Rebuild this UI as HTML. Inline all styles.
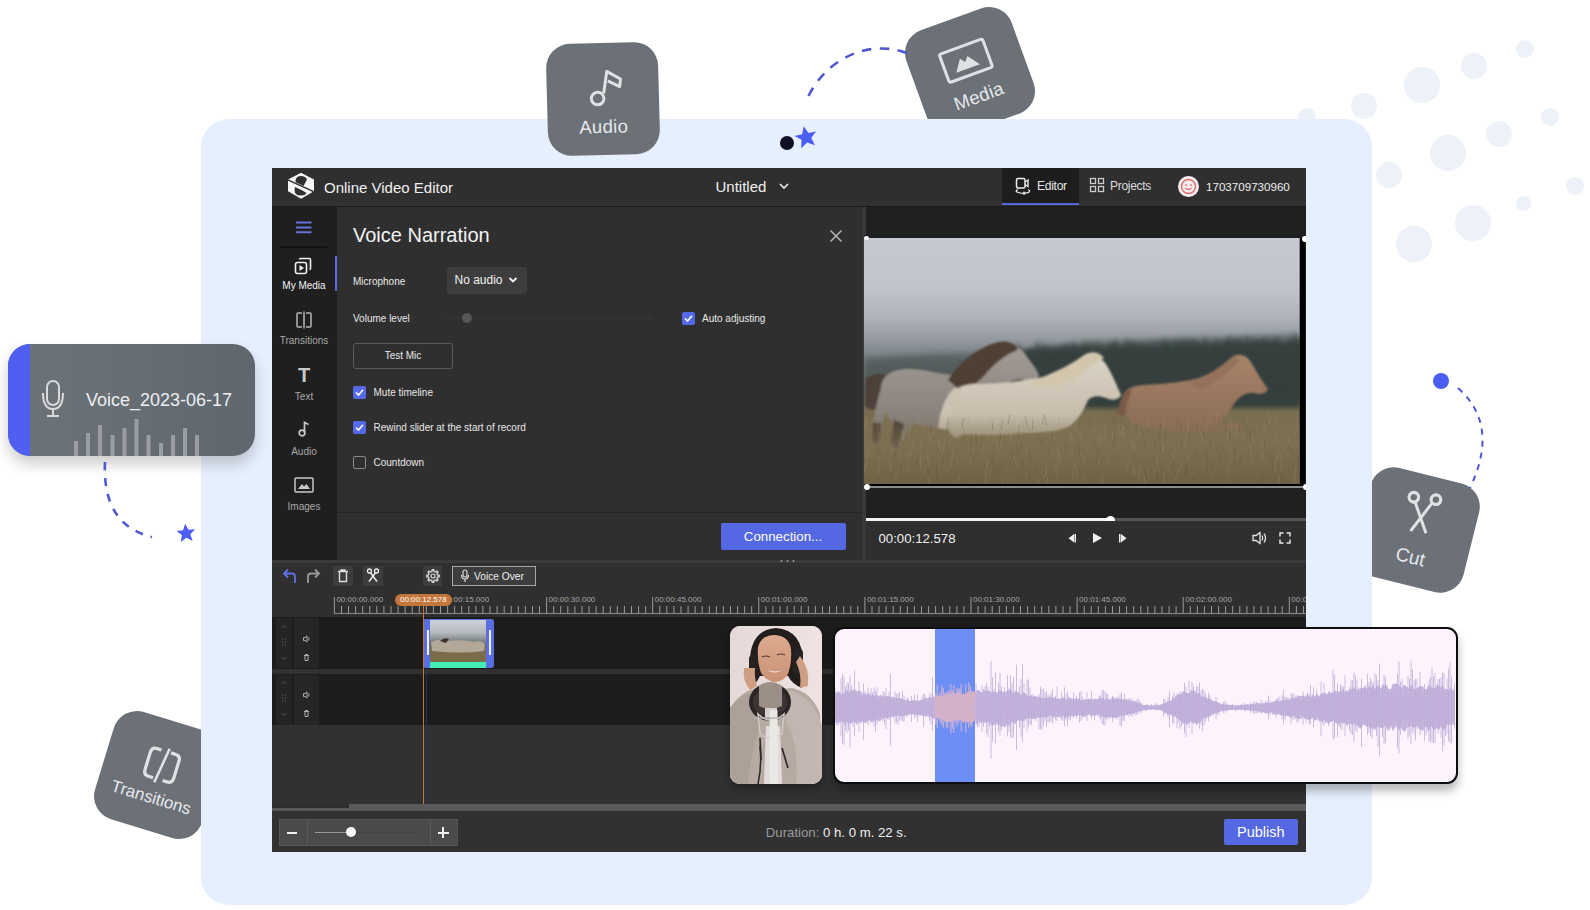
<!DOCTYPE html>
<html><head><meta charset="utf-8">
<style>
*{margin:0;padding:0;box-sizing:border-box}
html,body{width:1590px;height:910px;overflow:hidden;background:#fff;font-family:"Liberation Sans",sans-serif}
.a{position:absolute}
.dot{position:absolute;border-radius:50%;background:#edf1f8}
.card{position:absolute;background:#6b7177;border-radius:24px;color:#e3e5e9}
#panel{position:absolute;left:200.7px;top:118.7px;width:1171.7px;height:786.8px;background:#e6effd;border-radius:28px}
#app{position:absolute;left:272px;top:168px;width:1034px;height:684px;background:#2f2f2f;overflow:hidden;color:#ddd}
.t{position:absolute;white-space:nowrap;line-height:1}
.cb{position:absolute;width:13px;height:13px;border-radius:2px;background:#5568e8}
.cb svg{position:absolute;left:0;top:0}
.side .lbl{position:absolute;width:64px;left:0;text-align:center;font-size:10px;color:#a8a8a8}
</style></head><body>

<!-- decorative dots -->
<div class="dot" style="left:1516px;top:40px;width:18px;height:18px"></div>
<div class="dot" style="left:1461px;top:53px;width:26px;height:26px"></div>
<div class="dot" style="left:1404px;top:67px;width:36px;height:36px"></div>
<div class="dot" style="left:1351px;top:93px;width:26px;height:26px"></div>
<div class="dot" style="left:1298px;top:108px;width:18px;height:18px"></div>
<div class="dot" style="left:1541px;top:108px;width:18px;height:18px"></div>
<div class="dot" style="left:1486px;top:121px;width:26px;height:26px"></div>
<div class="dot" style="left:1430px;top:135px;width:36px;height:36px"></div>
<div class="dot" style="left:1376px;top:162px;width:26px;height:26px"></div>
<div class="dot" style="left:1566px;top:177px;width:18px;height:18px"></div>
<div class="dot" style="left:1516px;top:196px;width:15px;height:15px"></div>
<div class="dot" style="left:1455px;top:205px;width:36px;height:36px"></div>
<div class="dot" style="left:1396px;top:226px;width:36px;height:36px"></div>

<!-- cards behind panel -->
<div class="card" style="left:914px;top:16px;width:112px;height:112px;transform:rotate(-20deg)">
 <svg class="a" style="left:0;top:0" width="112" height="112" viewBox="0 0 112 112">
  <rect x="33" y="29" width="46" height="30" rx="2" fill="none" stroke="#dfe1e5" stroke-width="3"/>
  <path d="M43 52 L51 40 L55 45 L59 40 L68 52 Z" fill="#dfe1e5"/>
 </svg>
 <div class="t" style="left:0;width:112px;text-align:center;top:72.5px;font-size:18.5px;letter-spacing:0.2px;color:#e6e8eb">Media</div>
</div>

<div class="card" style="left:102px;top:719px;width:112px;height:112px;transform:rotate(17deg)">
 <svg class="a" style="left:0;top:0" width="112" height="112" viewBox="0 0 112 112">
  <path d="M52 31 H47.5 Q42 31 42 36.5 V54.5 Q42 60 47.5 60 H52" fill="none" stroke="#dfe1e5" stroke-width="3.2"/>
  <path d="M62 31 H66.5 Q72 31 72 36.5 V54.5 Q72 60 66.5 60 H62" fill="none" stroke="#dfe1e5" stroke-width="3.2"/>
  <path d="M59.5 27.5 L54.5 64" stroke="#dfe1e5" stroke-width="2.6"/>
 </svg>
 <div class="t" style="left:0;width:112px;text-align:center;top:71px;font-size:17px;color:#e6e8eb">Transitions</div>
</div>

<div class="card" style="left:1361px;top:474px;width:112px;height:112px;transform:rotate(14deg)">
 <svg class="a" style="left:0;top:0" width="112" height="112" viewBox="0 0 112 112">
  <circle cx="45" cy="25" r="4.8" fill="none" stroke="#dfe1e5" stroke-width="3.2"/>
  <circle cx="67" cy="22" r="4.8" fill="none" stroke="#dfe1e5" stroke-width="3.2"/>
  <path d="M47.5 29.5 L65.5 57 M64 26.5 L50 58.5" stroke="#dfe1e5" stroke-width="3"/>
 </svg>
 <div class="t" style="left:0;width:112px;text-align:center;top:74px;font-size:19px;color:#e6e8eb">Cut</div>
</div>


<div id="panel"></div>

<div id="app"><!-- header -->
<div class="a" style="left:0;top:0;width:1034px;height:34px;background:#2f2f2f"></div>
<div class="a" style="left:0;top:34px;width:1034px;height:4px;background:#313131"></div>
<div class="a" style="left:0;top:38px;width:1034px;height:1px;background:#1a1a1a"></div>
<svg class="a" style="left:14px;top:3px" width="30" height="30" viewBox="0 0 30 30">
 <path d="M15 1.7 L28 8.5 L28 20.3 L15 27.8 L2 20.3 L2 8.5 Z" fill="#f4f4f4"/>
 <path d="M9.5 9.5 Q10 5 15 5 Q19.5 5 21 8.5 L17.5 15 L9.8 11.3 Z" fill="#2f2f2f"/>
 <path d="M8.8 16 L15.5 19 L20.5 22 Q19.5 24.5 14.5 24.5 Q9 24.5 8.6 19.5 Z" fill="#2f2f2f"/>
 <path d="M1.9 8.9 L27.6 20.7" stroke="#2f2f2f" stroke-width="1.3"/>
</svg>
<div class="t" style="left:52px;top:12px;font-size:15px;color:#f0f0f0">Online Video Editor</div>
<div class="t" style="left:443.5px;top:11px;font-size:15px;color:#f0f0f0">Untitled</div>
<svg class="a" style="left:506px;top:14px" width="12" height="8" viewBox="0 0 12 8"><path d="M2 2 L6 6 L10 2" fill="none" stroke="#eee" stroke-width="1.6"/></svg>
<!-- tabs -->
<div class="a" style="left:730px;top:0;width:77px;height:37px;background:#1d1d1d"></div>
<div class="a" style="left:730px;top:34.5px;width:77px;height:2.5px;background:#5565de"></div>
<svg class="a" style="left:742px;top:9px" width="19" height="18" viewBox="0 0 19 18">
 <rect x="2.5" y="1.5" width="8.5" height="9.5" rx="1.5" fill="none" stroke="#ececec" stroke-width="1.5"/>
 <path d="M11 5 L14 3 V9.5 L11 7.5" fill="none" stroke="#ececec" stroke-width="1.4"/>
 <path d="M4 12.5 Q1 14 3 15 Q6 16.5 10.5 16.3 M14 12.5 Q17 14 14.5 15.3 Q13 15.9 11 16.2 M9.5 14.8 L11 16.2 L9.5 17.6" fill="none" stroke="#ececec" stroke-width="1.3"/>
</svg>
<div class="t" style="left:765px;top:12px;font-size:12px;letter-spacing:-0.25px;color:#e8e8e8">Editor</div>
<svg class="a" style="left:817px;top:9px" width="17" height="16" viewBox="0 0 17 16">
 <rect x="1.5" y="1.5" width="5" height="5" fill="none" stroke="#ccc" stroke-width="1.3"/>
 <rect x="9.5" y="1.5" width="5" height="5" fill="none" stroke="#ccc" stroke-width="1.3"/>
 <rect x="1.5" y="9.5" width="5" height="5" fill="none" stroke="#ccc" stroke-width="1.3"/>
 <rect x="9.5" y="9.5" width="5" height="5" fill="none" stroke="#ccc" stroke-width="1.3"/>
</svg>
<div class="t" style="left:838px;top:12px;font-size:12px;letter-spacing:-0.3px;color:#dcdcdc">Projects</div>
<svg class="a" style="left:905px;top:7px" width="23" height="23" viewBox="0 0 23 23">
 <circle cx="11.5" cy="11.5" r="10.5" fill="#f6eeee"/>
 <circle cx="11.5" cy="11.5" r="7" fill="none" stroke="#e07070" stroke-width="1.5"/>
 <circle cx="9" cy="10" r="0.9" fill="#e07070"/><circle cx="14" cy="10" r="0.9" fill="#e07070"/>
 <path d="M8.5 13 Q11.5 16 14.5 13" fill="none" stroke="#e07070" stroke-width="1.2"/>
</svg>
<div class="t" style="left:934px;top:13px;font-size:11.6px;color:#eeeeee">1703709730960</div>

<!-- sidebar -->
<div class="a side" style="left:0;top:39px;width:64.5px;height:353px;background:#1f1f1f">
 <svg class="a" style="left:24px;top:14px" width="16" height="13" viewBox="0 0 16 13"><path d="M0 1.5H15.5M0 6.4H15.5M0 11.3H15.5" stroke="#6670dc" stroke-width="2"/></svg>
 <div class="a" style="left:8px;top:39px;width:47px;height:2px;background:#121212"></div>
 <div class="a" style="left:62.5px;top:49px;width:2.5px;height:35px;background:#5a6be0"></div>
 <svg class="a" style="left:22px;top:50px" width="19" height="19" viewBox="0 0 19 19">
  <rect x="1.5" y="5.5" width="11" height="11" rx="2" fill="none" stroke="#f0f0f0" stroke-width="1.6"/>
  <path d="M5.5 2.5 Q5.5 1.5 6.5 1.5 H15.5 Q16.5 1.5 16.5 2.5 V11.5 Q16.5 12.5 15.5 12.5" fill="none" stroke="#f0f0f0" stroke-width="1.6"/>
  <path d="M5.5 8 L10 11 L5.5 14 Z" fill="#f0f0f0"/>
 </svg>
 <div class="lbl" style="top:73px;color:#f4f4f4">My Media</div>
 <svg class="a" style="left:23px;top:104px" width="18" height="18" viewBox="0 0 18 18">
  <path d="M7 2 H3 Q2 2 2 3 V15 Q2 16 3 16 H7 M11 2 H15 Q16 2 16 3 V15 Q16 16 15 16 H11 M9 0.5 V17.5" fill="none" stroke="#b8b8b8" stroke-width="1.5"/>
 </svg>
 <div class="lbl" style="top:128px">Transitions</div>
 <div class="t" style="left:0;width:64px;text-align:center;top:196px;font-size:20px;font-weight:bold;color:#c8c8c8;top:158px">T</div>
 <div class="lbl" style="top:184px">Text</div>
 <svg class="a" style="left:25px;top:214px" width="14" height="16" viewBox="0 0 14 16">
  <circle cx="5" cy="12" r="2.8" fill="none" stroke="#c8c8c8" stroke-width="1.7"/>
  <path d="M7.5 11.5 V1.5 L11.5 3.5" fill="none" stroke="#c8c8c8" stroke-width="1.7"/>
 </svg>
 <div class="lbl" style="top:239px">Audio</div>
 <svg class="a" style="left:22px;top:270px" width="20" height="17" viewBox="0 0 20 17">
  <rect x="1" y="1" width="18" height="14" rx="1" fill="none" stroke="#c8c8c8" stroke-width="1.5"/>
  <path d="M4 12 L8 7 L10 9.5 L12.5 7 L16 12 Z" fill="#c8c8c8"/>
 </svg>
 <div class="lbl" style="top:294px">Images</div>
</div>

<!-- voice narration panel -->
<div class="a" style="left:64.5px;top:39px;width:525.5px;height:353px;background:#2f2f2f">
 <div class="t" style="left:16.5px;top:18px;font-size:20px;color:#f2f2f2">Voice Narration</div>
 <svg class="a" style="left:492px;top:22px" width="14" height="14" viewBox="0 0 14 14"><path d="M1.5 1.5 L12.5 12.5 M12.5 1.5 L1.5 12.5" stroke="#b5b5b5" stroke-width="1.5"/></svg>
 <div class="t" style="left:16.5px;top:70px;font-size:10px;color:#e8e8e8">Microphone</div>
 <div class="a" style="left:110px;top:60px;width:80px;height:27px;border-radius:3px;background:#3d3d3d"></div>
 <div class="t" style="left:118px;top:67px;font-size:12px;color:#f0f0f0">No audio</div>
 <svg class="a" style="left:171px;top:69px" width="10" height="8" viewBox="0 0 10 8"><path d="M1.5 2 L5 5.5 L8.5 2" fill="none" stroke="#f2f2f2" stroke-width="1.8"/></svg>
 <div class="t" style="left:16.5px;top:107px;font-size:10px;color:#e8e8e8">Volume level</div>
 <div class="a" style="left:110px;top:109px;width:207px;height:4px;border-radius:2px;background:#333333"></div>
 <div class="a" style="left:125.5px;top:106px;width:10px;height:10px;border-radius:50%;background:#555555"></div>
 <div class="t" style="left:365.5px;top:107px;font-size:10px;color:#e8e8e8">Auto adjusting</div>
 <div class="a" style="left:16.5px;top:136px;width:100px;height:26px;border:1px solid #5a5a5a;border-radius:3px"></div>
 <div class="t" style="left:16.5px;width:100px;text-align:center;top:144px;font-size:10px;color:#e8e8e8">Test Mic</div>
 <div class="t" style="left:37px;top:181.2px;font-size:10px;color:#e8e8e8">Mute timeline</div>
 <div class="t" style="left:37px;top:216.2px;font-size:10px;color:#e8e8e8">Rewind slider at the start of record</div>
 <div class="a" style="left:16.5px;top:249px;width:13px;height:13px;border:1.5px solid #8a8a8a;border-radius:2px"></div>
 <div class="cb" style="left:345px;top:105px"><svg width="13" height="13" viewBox="0 0 13 13"><path d="M3 6.5 L5.5 9 L10 3.8" fill="none" stroke="#fff" stroke-width="1.6"/></svg></div>
 <div class="cb" style="left:16.5px;top:179px"><svg width="13" height="13" viewBox="0 0 13 13"><path d="M3 6.5 L5.5 9 L10 3.8" fill="none" stroke="#fff" stroke-width="1.6"/></svg></div>
 <div class="cb" style="left:16.5px;top:214px"><svg width="13" height="13" viewBox="0 0 13 13"><path d="M3 6.5 L5.5 9 L10 3.8" fill="none" stroke="#fff" stroke-width="1.6"/></svg></div>
 <div class="t" style="left:37px;top:251px;font-size:10px;color:#e8e8e8">Countdown</div>
 <div class="a" style="left:0;top:305px;width:525.5px;height:1px;background:#242424"></div>
 <div class="a" style="left:384px;top:316px;width:125px;height:26.5px;border-radius:2px;background:#5468e4"></div>
 <div class="t" style="left:384px;width:125px;text-align:center;top:322.5px;font-size:13.3px;color:#ffffff">Connection...</div>
</div>
<!-- divider -->
<div class="a" style="left:590px;top:39px;width:3.5px;height:353px;background:#393939"></div>
<div class="a" style="left:593.5px;top:39px;width:440.5px;height:312px;background:#202020"></div>
<!-- video frame -->
<div class="a" style="left:592px;top:66.5px;width:442px;height:3px;background:#1b1e22"></div>
<div class="a" style="left:592.3px;top:69.7px;width:440.7px;height:248.3px;background:#000"></div>
<svg class="a" style="left:592.3px;top:69.7px" width="435.7" height="246" viewBox="0 0 435.7 246">
 <defs>
  <linearGradient id="sky" x1="0" y1="0" x2="0" y2="1">
   <stop offset="0" stop-color="#c6c9d0"/>
   <stop offset="0.2" stop-color="#c1c4ca"/>
   <stop offset="0.32" stop-color="#b0b4ba"/>
   <stop offset="0.4" stop-color="#989ea4"/>
   <stop offset="0.46" stop-color="#838a8f"/>
   <stop offset="0.54" stop-color="#6a7374"/>
   <stop offset="0.62" stop-color="#5f655c"/>
   <stop offset="0.68" stop-color="#776c50"/>
   <stop offset="0.8" stop-color="#7d7052"/>
   <stop offset="0.92" stop-color="#7a6c4d"/>
   <stop offset="1" stop-color="#6c6045"/>
  </linearGradient>
  <filter id="bl" x="-10%" y="-10%" width="120%" height="120%"><feGaussianBlur stdDeviation="1.2"/></filter>
  <filter id="bl05"><feGaussianBlur stdDeviation="0.5"/></filter>
  <filter id="bl2" x="-10%" y="-30%" width="120%" height="160%"><feGaussianBlur stdDeviation="2"/></filter>
  <filter id="bl3" x="-10%" y="-30%" width="120%" height="160%"><feGaussianBlur stdDeviation="3"/></filter>
  <linearGradient id="gfront" x1="0" y1="0" x2="0" y2="1"><stop offset="0" stop-color="#7d7052" stop-opacity="0"/><stop offset="0.4" stop-color="#7d7052" stop-opacity="0.6"/><stop offset="1" stop-color="#6e6246" stop-opacity="0.9"/></linearGradient>
  <linearGradient id="wh" x1="0" y1="0" x2="0" y2="1"><stop offset="0" stop-color="#dcd4c6"/><stop offset="1" stop-color="#bdb4a2"/></linearGradient>
  <linearGradient id="gr" x1="0" y1="0" x2="0" y2="1"><stop offset="0" stop-color="#a39c96"/><stop offset="1" stop-color="#7d7670"/></linearGradient>
  <linearGradient id="br" x1="0" y1="0" x2="0" y2="1"><stop offset="0" stop-color="#a8836a"/><stop offset="1" stop-color="#8a6c55"/></linearGradient>
 </defs>
 <rect width="435.7" height="246" fill="url(#sky)"/>
 <path d="M0 120 Q80 114 160 116 L220 104 L436 96 L436 165 L0 168 Z" fill="#46504d" opacity="0.65" filter="url(#bl3)"/>
 <path d="M140 170 L140.0 113.6 L143.0 108.3 L146.0 113.6 L149.0 107.2 L152.0 111.8 L155.0 105.3 L158.0 114.0 L161.0 109.4 L164.0 112.0 L167.0 107.5 L170.0 112.5 L173.0 102.1 L176.0 112.3 L179.0 103.1 L182.0 111.2 L185.0 104.3 L188.0 113.2 L191.0 104.1 L194.0 112.6 L197.0 104.7 L200.0 110.4 L203.0 103.5 L206.0 111.8 L209.0 102.7 L212.0 109.9 L215.0 105.7 L218.0 111.1 L221.0 101.6 L224.0 112.1 L227.0 102.4 L230.0 112.1 L233.0 102.3 L236.0 111.5 L239.0 104.4 L242.0 111.7 L245.0 103.8 L248.0 109.1 L251.0 100.6 L254.0 109.2 L257.0 105.6 L260.0 109.7 L263.0 99.6 L266.0 109.1 L269.0 101.8 L272.0 109.2 L275.0 102.5 L278.0 109.6 L281.0 103.4 L284.0 110.4 L287.0 101.6 L290.0 110.3 L293.0 100.7 L296.0 110.3 L299.0 99.3 L302.0 107.6 L305.0 100.4 L308.0 109.9 L311.0 98.9 L314.0 108.5 L317.0 98.4 L320.0 107.2 L323.0 99.6 L326.0 108.1 L329.0 98.6 L332.0 106.4 L335.0 102.2 L338.0 109.0 L341.0 98.1 L344.0 108.3 L347.0 103.3 L350.0 106.2 L353.0 100.8 L356.0 107.8 L359.0 101.5 L362.0 105.5 L365.0 97.2 L368.0 105.3 L371.0 98.9 L374.0 106.0 L377.0 98.0 L380.0 107.7 L383.0 96.6 L386.0 107.6 L389.0 99.1 L392.0 104.7 L395.0 100.3 L398.0 104.4 L401.0 98.1 L404.0 105.3 L407.0 100.7 L410.0 104.4 L413.0 97.6 L416.0 106.3 L419.0 101.4 L422.0 106.4 L425.0 99.3 L428.0 104.5 L431.0 95.1 L434.0 104.7 L437.0 98.0 L440.0 104.8 L443.0 96.5 L436 170 Z" fill="#333d3a" opacity="0.9" filter="url(#bl2)"/>
 <g filter="url(#bl)">
  <path d="M2 140 Q12 134 24 137 L20 170 Q8 174 1 168 Z" fill="#4e4139"/>
  <path d="M17 150 C18 136 30 130 48 131 C65 132 78 137 90 137 C105 128 125 108 148 108 C156 108 160 114 164 120 C168 126 174 132 175 138 C172 143 165 144 160 142 C150 140 140 146 132 152 C120 163 108 178 92 186 C84 190 72 190 60 188 L50 186 L40 200 L34 210 L28 207 L34 192 C28 185 24 180 22 174 L17 190 L14 206 L8 204 L9 188 C10 175 14 160 17 150 Z" fill="url(#gr)"/>
  <path d="M9 185 L17 185 L15 206 L8 204 Z M30 182 L40 186 L34 210 L27 207 Z" fill="#4a3e36"/>
  <path d="M84 142 C95 125 115 108 135 104 C145 102 152 106 154 112 C142 116 130 126 120 138 C112 146 104 152 98 154 Z" fill="#4f3f36"/>
  <path d="M86 168 C86 152 96 146 112 146 C140 146 160 142 180 139 C198 136 210 128 220 121 C228 116 236 118 242 126 C248 136 253 148 257 157 C255 162 248 163 242 160 C234 157 228 158 224 162 C220 172 214 182 206 188 C196 193 180 195 160 195 C135 197 115 198 100 196 L92 200 C84 196 80 188 86 168 Z" fill="url(#wh)"/>
  <path d="M90 150 C80 160 76 175 74 190 L82 192 C86 178 90 165 98 150 Z" fill="#cbc2b2"/>
  <path d="M168 143 C188 136 205 128 220 117 C228 112 236 114 240 120 C228 128 215 138 200 146 C190 150 178 150 168 148 Z" fill="#d2c6ad"/>
  <path d="M258 165 C258 152 266 148 280 147 C300 146 318 144 332 141 C348 136 360 126 368 119 C376 114 384 118 388 126 C394 136 400 146 404 151 C402 156 396 157 390 155 C382 154 376 158 370 166 C364 176 358 184 352 187 L376 185 L380 190 L350 194 C320 196 296 193 280 190 C268 186 258 178 258 165 Z" fill="url(#br)"/>
  <path d="M262 152 C256 160 254 170 255 178 L262 176 C262 168 264 160 268 152 Z" fill="#7a5a48"/>
  <path d="M325 146 C345 138 360 128 370 118 L376 122 C365 134 350 146 338 152 Z" fill="#94715a"/>
 </g>
 <rect y="176" width="435.7" height="70" fill="url(#gfront)"/>
 <path d="M392.8 192.1l-1.5 -8.2M55.2 185.1l-1.7 -11.8M428.3 240.0l2.8 -6.6M389.7 203.8l-2.0 -7.3M147.3 204.5l-0.1 -11.4M209.8 229.4l2.9 -4.5M326.9 238.2l1.7 -4.2M85.7 232.6l2.7 -12.4M347.6 239.2l2.7 -4.3M237.7 204.7l-1.9 -6.9M64.9 228.4l-2.0 -13.0M414.1 224.7l-2.4 -11.1M208.9 203.3l-2.1 -7.6M430.9 245.5l-0.0 -9.6M38.9 202.2l2.2 -11.0M5.0 219.5l1.0 -6.3M300.1 246.5l0.1 -12.6M95.5 228.2l-2.7 -9.7M98.6 188.4l-1.1 -5.2M257.3 200.0l-3.0 -12.1M121.4 210.8l2.0 -5.0M15.7 223.7l0.3 -4.9M0.4 191.8l0.7 -9.1M274.4 241.2l-0.4 -7.4M259.8 201.4l-0.0 -12.8M139.2 247.0l-1.3 -8.4M324.2 192.4l-1.2 -10.8M146.5 203.7l-0.2 -8.8M324.8 222.2l-1.5 -4.3M186.5 221.3l0.8 -10.4M397.5 209.3l2.1 -7.5M188.7 203.0l2.5 -11.0M208.6 219.6l-1.0 -8.5M435.3 229.2l2.1 -4.4M281.5 245.0l-2.2 -10.4M400.2 194.4l-0.5 -9.5M271.4 187.7l-0.7 -5.0M25.1 221.2l2.3 -10.7M220.5 242.4l0.7 -9.0M240.5 201.0l0.1 -10.8M285.6 190.4l-2.5 -10.0M259.0 200.0l-0.1 -11.9M347.3 186.9l-2.7 -10.5M290.0 236.7l0.7 -5.3M102.5 206.0l-0.9 -9.5M59.5 237.4l1.8 -9.8M172.4 191.1l-1.8 -4.3M387.7 215.3l-3.0 -10.8M387.9 224.0l-0.2 -7.9M66.3 201.0l-2.0 -6.5M102.5 215.4l2.5 -4.3M71.2 197.7l-1.6 -4.2M174.9 246.3l-1.1 -7.3M123.5 231.1l-2.0 -10.5M2.7 188.8l-0.5 -11.0M239.1 247.3l-0.9 -8.7M31.1 241.6l2.6 -8.4M106.2 188.2l-2.6 -7.6M78.2 217.0l0.2 -7.6M373.6 198.5l0.2 -4.2M134.1 213.3l-1.7 -11.4M135.9 190.5l1.9 -11.0M56.6 190.2l-2.5 -6.2M251.6 200.5l1.2 -4.6M87.1 203.0l-2.4 -7.4M166.7 193.2l-2.0 -4.6M413.9 223.6l-0.4 -6.1M41.5 218.4l1.3 -5.5M210.1 240.6l-1.7 -7.5M87.7 220.4l1.5 -7.2M269.5 210.3l2.0 -5.3M271.7 235.4l-2.9 -7.4M255.8 196.6l-1.1 -7.5M136.1 209.1l1.2 -8.3M227.7 202.9l-2.5 -4.7M266.4 198.2l2.4 -8.7M425.0 219.3l-3.0 -7.5M163.1 240.9l-1.2 -5.9M131.8 202.7l2.8 -9.4M13.3 192.3l0.6 -9.1M26.8 215.5l2.7 -11.5M366.6 215.0l-1.8 -4.9M417.2 224.4l-2.4 -12.7M323.9 190.3l0.3 -7.6M51.3 222.6l1.1 -7.4M236.0 209.3l-2.4 -12.4M353.5 185.3l-0.8 -10.9M109.4 213.9l0.1 -7.4M95.3 246.4l-0.2 -8.0M121.7 245.1l0.0 -10.2M180.2 240.1l2.5 -11.4M184.1 246.2l-1.7 -12.9M118.1 214.6l1.0 -6.6M306.1 190.7l0.9 -5.0M160.8 215.1l2.8 -9.2M247.9 201.6l1.4 -8.9M209.8 229.5l1.6 -4.1M219.8 223.5l-2.7 -11.1M16.7 209.3l-2.9 -7.1M196.2 226.3l-0.8 -12.3M310.9 244.0l2.9 -12.5M90.4 213.6l-2.5 -4.5M323.1 201.5l0.8 -11.5M274.2 200.5l2.3 -6.4M244.7 185.6l1.9 -4.4M266.5 223.6l2.7 -6.0M27.9 228.1l-2.6 -4.8M367.8 192.6l-1.4 -10.8M0.7 232.8l2.4 -8.6M67.8 198.6l2.7 -6.4M195.0 221.1l-2.1 -12.2M182.9 234.4l-1.2 -11.5M279.3 245.2l1.6 -5.0M44.9 224.8l0.5 -11.6M423.8 209.2l1.3 -9.7M179.0 239.8l-1.2 -4.6M411.3 234.8l0.0 -12.1M181.4 199.3l0.4 -4.2M47.0 217.2l2.7 -12.4M44.8 233.4l0.2 -5.0M230.6 193.8l2.6 -4.5M193.2 242.8l0.0 -9.2M58.5 197.8l1.4 -10.3M434.9 193.4l-2.5 -5.5M270.2 239.0l1.2 -5.5M213.1 240.0l-1.3 -12.3M55.9 226.3l1.4 -10.8M411.4 204.7l1.0 -11.7M365.2 227.6l1.4 -7.1M310.2 223.7l-2.0 -11.2M0.5 234.8l2.0 -10.9M371.8 200.0l0.9 -11.5M253.5 231.8l-0.4 -8.5M320.6 208.5l1.5 -9.4M299.2 188.9l2.0 -6.3M24.8 185.9l-2.4 -10.9M191.2 235.6l0.1 -8.3M431.4 197.7l-1.0 -4.6M161.0 190.6l-3.0 -6.0M390.0 228.4l-0.6 -6.0M311.1 212.9l-1.0 -5.7M159.4 191.0l-0.8 -9.5M125.6 185.4l-0.4 -5.3M2.6 219.6l2.0 -12.6M403.1 190.0l-3.0 -5.4M262.4 232.7l1.8 -8.3M400.6 223.3l-2.0 -8.8M339.5 204.5l-2.3 -10.1M36.0 225.4l0.8 -12.2M223.7 214.6l-2.1 -8.0M196.0 189.5l-1.5 -10.1M39.6 204.1l-1.2 -12.4M150.8 244.5l-0.9 -4.8M297.3 214.1l2.2 -4.9M299.1 213.5l-2.7 -11.8M124.5 201.7l0.0 -11.4M268.2 210.5l-2.2 -7.8M76.5 213.1l-2.8 -10.6M124.1 226.4l-0.3 -4.3M270.1 238.4l-0.2 -5.6M56.8 232.1l-0.3 -10.5M75.6 210.9l-0.6 -12.4M270.1 212.6l-0.3 -9.5M15.5 236.6l-1.5 -9.9M253.3 216.7l1.7 -12.1M147.7 223.5l2.6 -5.5M217.8 202.2l-2.7 -8.7M431.2 234.6l-0.3 -6.0M53.2 197.1l-1.1 -12.9M364.4 234.3l-2.0 -6.3M28.5 196.1l-0.1 -10.5M397.5 220.1l0.4 -7.4M15.9 201.4l-2.3 -8.1M324.5 222.3l-0.6 -6.9M276.6 238.9l-1.2 -11.1M3.9 221.8l-3.0 -6.1M99.6 197.9l0.5 -10.0M301.2 190.0l-0.2 -5.7M41.5 231.7l-0.1 -7.1M58.3 213.1l-1.8 -9.0M405.0 186.3l-1.2 -8.5M117.7 195.2l2.5 -7.6M153.3 228.8l-2.9 -9.6M122.6 241.4l-1.5 -8.0M211.5 194.4l1.3 -10.0M234.3 233.5l0.7 -12.6M220.2 226.7l1.1 -7.0M26.6 232.5l-0.0 -6.0M314.9 233.2l2.6 -8.2M417.9 235.6l-2.6 -11.5M21.4 245.4l-0.0 -6.9M105.2 227.1l2.4 -9.1M143.3 201.3l-3.0 -7.3M64.9 204.8l2.7 -10.9M108.9 203.5l-0.1 -9.7M228.4 201.9l1.7 -5.3M191.5 233.3l2.2 -8.9M412.6 187.7l-0.5 -12.1M65.2 247.2l-1.2 -9.0M207.2 204.4l-1.5 -11.0M45.4 200.0l0.7 -13.0M293.6 227.3l-0.8 -8.7M147.0 199.7l-0.0 -6.8M258.7 198.2l-2.6 -6.1M79.1 213.1l2.4 -12.1M341.8 193.4l2.2 -12.5M365.0 243.9l-2.6 -10.5M285.9 242.2l-2.8 -10.1M150.5 195.8l0.1 -6.0M406.6 186.9l-2.4 -11.9M186.6 197.2l-2.3 -6.0M415.1 244.9l-0.5 -7.1M20.3 213.9l0.8 -6.0M129.9 204.1l0.0 -9.5M125.3 241.0l1.3 -9.5M362.9 203.1l1.4 -9.6M115.6 205.8l0.9 -12.8M245.0 226.3l-2.5 -6.4M430.3 216.3l-0.2 -7.8" stroke="#a09068" stroke-width="1" opacity="0.3" filter="url(#bl05)"/>
 <path d="M271.6 231.7l2.7 -11.2M402.1 186.8l2.7 -8.2M250.2 185.8l-1.3 -6.0M333.9 195.1l-2.2 -11.2M295.5 197.9l1.1 -12.5M28.4 204.0l-3.0 -9.4M252.2 185.6l-1.9 -4.4M154.7 218.1l-2.4 -11.0M148.6 223.5l-1.0 -12.3M430.2 218.6l-1.6 -7.7M360.3 213.7l-2.7 -7.8M14.3 216.1l-2.2 -11.5M65.1 238.2l-0.3 -6.7M371.6 246.5l-0.1 -8.1M342.7 233.8l1.0 -10.3M158.5 229.4l-0.1 -6.5M301.2 203.5l0.9 -12.5M356.1 225.8l-0.9 -11.2M321.7 237.2l2.1 -7.2M72.5 237.7l-0.1 -12.4M313.8 231.0l1.7 -5.5M290.2 211.5l1.6 -9.6M314.1 186.7l-0.4 -5.4M84.3 187.2l-0.7 -8.2M253.3 245.4l-0.5 -11.4M280.0 208.3l0.6 -5.3M417.3 246.0l-0.9 -9.5M127.1 246.3l2.8 -7.4M53.1 224.2l-1.2 -8.0M360.5 185.8l-1.4 -8.8M340.9 200.5l-2.1 -6.4M127.8 223.3l0.9 -8.3M399.6 240.9l-2.9 -8.9M129.3 237.3l2.0 -4.6M255.4 236.1l-1.6 -4.6M345.2 226.8l1.3 -4.2M188.2 204.8l-0.1 -9.4M163.2 188.5l-2.1 -10.3M102.2 208.4l-1.9 -10.6M415.1 227.9l-2.3 -6.0M371.3 217.6l0.4 -9.3M67.4 195.0l-0.7 -7.4M408.9 228.3l-0.2 -10.1M51.4 227.1l1.0 -6.6M293.1 244.3l-0.4 -9.8M177.7 204.3l-2.8 -4.5M136.9 191.8l2.5 -8.9M249.1 208.7l1.4 -9.6M136.9 232.4l2.4 -9.0M331.2 221.2l1.9 -8.0M416.3 230.9l-1.4 -10.3M294.7 203.0l1.6 -4.6M12.0 188.2l-0.9 -5.2M144.0 185.8l2.0 -9.3M409.2 235.1l-1.1 -5.1M201.0 212.4l1.6 -8.0M232.2 246.1l-2.4 -9.4M182.9 188.3l-2.8 -12.8M153.4 200.6l2.0 -12.8M16.5 195.7l1.3 -4.9M86.9 235.2l1.1 -6.9M428.3 236.4l1.2 -12.3M234.0 235.3l0.6 -7.3M253.1 232.9l-1.2 -10.4M119.7 230.1l1.5 -4.6M417.2 241.5l2.0 -10.2M77.7 226.1l2.5 -12.1M168.6 191.9l0.3 -10.2M271.3 241.5l0.8 -5.5M97.9 188.9l2.0 -9.1M317.4 211.3l0.2 -7.8M83.0 222.5l1.1 -9.8M370.7 225.6l-1.6 -12.3M40.5 194.6l-2.4 -9.5M321.0 236.4l1.3 -11.2M28.1 198.0l-0.2 -7.4M419.7 244.5l1.6 -4.6M129.0 192.4l-0.9 -8.3M400.4 209.1l-0.0 -6.6M344.0 221.3l-1.0 -6.7M226.4 188.2l-1.6 -7.8M32.0 202.1l-0.1 -4.9M171.2 234.0l0.6 -7.9M281.3 225.1l-2.9 -4.3M435.6 232.6l-2.1 -12.0M73.8 213.8l-0.7 -4.7M386.0 197.4l2.0 -4.2M261.1 193.6l2.5 -6.1M13.6 196.6l-1.4 -7.9M162.6 233.8l0.1 -5.4M72.7 243.7l-0.3 -4.7M230.5 209.5l-1.2 -12.3M361.7 193.7l-0.0 -7.2M62.7 246.0l-1.3 -6.4M391.2 196.1l-2.7 -5.2M379.9 187.5l-2.3 -9.3M282.9 241.2l-2.6 -10.5M38.5 207.2l-0.4 -4.7M283.7 196.0l-0.1 -5.2M215.3 218.8l0.3 -12.1M113.0 207.5l-1.4 -12.0M178.0 205.7l-2.6 -4.9M430.4 219.2l-1.4 -7.9M424.2 212.0l0.1 -5.9M166.5 224.9l-1.0 -12.3M324.5 201.1l1.6 -8.2M253.0 200.9l-2.7 -7.2M53.3 233.1l0.6 -7.0M382.3 193.4l-0.5 -7.8M233.4 215.2l-1.8 -5.1M281.1 199.4l-2.9 -6.5M346.7 233.3l2.0 -9.6M312.2 238.6l-2.9 -9.6M130.8 230.9l-2.0 -7.5M178.2 186.7l1.6 -8.1M375.1 228.0l2.2 -10.9M345.8 211.2l0.9 -9.9M297.3 233.5l0.2 -5.7M192.0 236.8l-1.2 -6.1M30.9 218.8l1.0 -6.0M41.1 231.0l-1.1 -7.7M221.0 238.3l-0.3 -9.1M383.2 204.3l0.6 -7.3M329.4 242.0l-2.5 -4.6M144.8 228.7l2.1 -8.6M272.5 192.0l-0.8 -12.0M411.1 244.2l2.1 -7.5M28.5 191.9l1.4 -13.0M132.9 238.5l1.4 -11.7M107.8 208.2l-0.1 -12.6M318.6 198.0l-2.3 -12.3M307.3 231.1l2.2 -8.4M365.7 204.0l0.6 -9.0M136.1 202.6l0.6 -8.2M268.8 223.7l2.6 -10.0M309.3 229.4l0.7 -6.1M247.0 247.5l1.3 -6.9M36.8 234.0l0.2 -9.9M374.9 194.2l0.7 -8.4M398.2 244.6l-1.0 -10.8M231.8 227.1l2.2 -9.7M423.1 216.1l0.9 -8.4M83.0 243.5l-1.2 -6.5M113.1 247.3l1.4 -10.4M2.8 204.3l2.5 -8.2M186.0 217.8l-1.1 -8.1M12.8 192.6l-2.9 -7.6M371.6 215.4l-2.5 -4.6M252.1 203.4l-2.7 -10.4M408.3 226.9l-0.4 -4.5M386.3 203.7l-1.1 -12.8M116.4 211.0l0.6 -12.5M322.4 232.4l-0.1 -9.5M340.6 216.0l2.3 -5.5M296.7 214.8l-0.4 -12.5M405.7 224.2l1.7 -9.3M84.4 211.3l-2.9 -5.4M143.3 201.1l-2.9 -4.2M156.0 212.5l2.4 -10.1M95.6 247.3l0.5 -5.7M253.8 222.7l0.7 -12.8" stroke="#5e5236" stroke-width="1" opacity="0.3" filter="url(#bl05)"/>
</svg>
<!-- crop line + handles -->
<div class="a" style="left:593.5px;top:318px;width:440px;height:2px;background:#8e8e8e"></div>
<div class="a" style="left:591.5px;top:316px;width:6px;height:6px;border-radius:50%;background:#fff"></div>
<div class="a" style="left:1030.5px;top:316px;width:6px;height:6px;border-radius:50%;background:#fff"></div>
<div class="a" style="left:592px;top:67.5px;width:4.5px;height:4.5px;border-radius:50%;background:#f4f4f4"></div>
<div class="a" style="left:1030px;top:68px;width:6px;height:6px;border-radius:50%;background:#fff"></div>
<!-- progress -->
<div class="a" style="left:593.5px;top:350.3px;width:440.5px;height:3px;background:#555"></div>
<div class="a" style="left:593.5px;top:350.3px;width:245px;height:3px;background:#f2f2f2"></div>
<div class="a" style="left:833.5px;top:347.5px;width:9px;height:9px;border-radius:50%;background:#fff"></div>
<!-- controls -->
<div class="a" style="left:593.5px;top:353px;width:440.5px;height:39px;background:#2f2f2f"></div>
<div class="t" style="left:606.5px;top:364px;font-size:13.2px;color:#f0f0f0">00:00:12.578</div>
<svg class="a" style="left:790px;top:363px" width="70" height="14" viewBox="0 0 70 14">
 <path d="M12.5 3 V11.5 H14 V3 Z M12 3 L6.5 7.2 L12 11.5 Z" fill="#eee"/>
 <path d="M31 2 L40 7 L31 12 Z" fill="#f2f2f2"/>
 <path d="M57 3 V11.5 H58.5 V3 Z M59 3 L64.5 7.2 L59 11.5 Z" fill="#eee"/>
</svg>
<svg class="a" style="left:978px;top:362px" width="50" height="16" viewBox="0 0 50 16">
 <path d="M3 5.5 H6 L10 2.5 V13.5 L6 10.5 H3 Z" fill="none" stroke="#e5e5e5" stroke-width="1.3"/>
 <path d="M12 5.5 Q13.5 8 12 10.5 M14 3.5 Q17 8 14 12.5" fill="none" stroke="#e5e5e5" stroke-width="1.3"/>
 <path d="M30 6.5 V3 H33.5 M36.5 3 H40 V6.5 M40 9.5 V13 H36.5 M33.5 13 H30 V9.5" fill="none" stroke="#e5e5e5" stroke-width="1.5"/>
</svg>
<!-- separator -->
<div class="a" style="left:0;top:392px;width:1034px;height:3px;background:#3a3a3a"></div>
<svg class="a" style="left:506px;top:391px" width="18" height="5" viewBox="0 0 18 5"><circle cx="3.5" cy="2" r="1" fill="#9a9a9a"/><circle cx="9.5" cy="2" r="1" fill="#9a9a9a"/><circle cx="15.5" cy="2" r="1" fill="#9a9a9a"/></svg>
<!-- toolbar -->
<div class="a" style="left:0;top:395px;width:1034px;height:53px;background:#2f2f2f"></div>
<svg class="a" style="left:10px;top:400px" width="40" height="16" viewBox="0 0 40 16">
 <path d="M6 1.5 L2 5.5 L6 9.5 M2 5.5 H10 Q13 5.5 13 8.5 V15" fill="none" stroke="#5f6fe8" stroke-width="1.8"/>
 <path d="M33 1.5 L37 5.5 L33 9.5 M37 5.5 H29 Q26 5.5 26 8.5 V15" fill="none" stroke="#9a9a9a" stroke-width="1.8"/>
</svg>
<div class="a" style="left:61.3px;top:398.4px;width:19.7px;height:19.6px;background:#3c3c3c"></div>
<svg class="a" style="left:61.3px;top:398.4px" width="20" height="20" viewBox="0 0 20 20">
 <path d="M5 5.5 H15 M8 5.5 V4 H12 V5.5 M6.5 6 V15.5 H13.5 V6" fill="none" stroke="#ddd" stroke-width="1.4"/>
</svg>
<div class="a" style="left:91.4px;top:398.4px;width:19.7px;height:19.6px;background:#3c3c3c"></div>
<svg class="a" style="left:91.4px;top:398.4px" width="20" height="20" viewBox="0 0 20 20">
 <circle cx="6.5" cy="5" r="2" fill="none" stroke="#eee" stroke-width="1.3"/><circle cx="13.5" cy="5" r="2" fill="none" stroke="#eee" stroke-width="1.3"/>
 <path d="M7.5 6.8 L14 15.5 M12.5 6.8 L6 15.5" stroke="#eee" stroke-width="1.5"/>
</svg>
<div class="a" style="left:150.5px;top:398.4px;width:19.7px;height:19.6px;background:#3c3c3c"></div>
<svg class="a" style="left:150.5px;top:398.4px" width="20" height="20" viewBox="0 0 20 20"><path d="M14.49 9.00 L16.24 9.12 L16.24 10.88 L14.49 11.00 L13.88 12.46 L15.03 13.79 L13.79 15.03 L12.46 13.88 L11.00 14.49 L10.88 16.24 L9.12 16.24 L9.00 14.49 L7.54 13.88 L6.21 15.03 L4.97 13.79 L6.12 12.46 L5.51 11.00 L3.76 10.88 L3.76 9.12 L5.51 9.00 L6.12 7.54 L4.97 6.21 L6.21 4.97 L7.54 6.12 L9.00 5.51 L9.12 3.76 L10.88 3.76 L11.00 5.51 L12.46 6.12 L13.79 4.97 L15.03 6.21 L13.88 7.54 Z" fill="none" stroke="#dcdcdc" stroke-width="1.3" stroke-linejoin="round"/><circle cx="10" cy="10" r="2" fill="none" stroke="#dcdcdc" stroke-width="1.2"/></svg>
<div class="a" style="left:180.2px;top:398.4px;width:83.5px;height:19.6px;background:#3d3d3d;border:1.5px solid #a8a8a8"></div>
<svg class="a" style="left:188px;top:401px" width="10" height="14" viewBox="0 0 10 14">
 <rect x="3" y="1" width="4" height="7" rx="2" fill="none" stroke="#ddd" stroke-width="1.2"/>
 <path d="M1.5 6 Q1.5 10 5 10 Q8.5 10 8.5 6 M5 10 V13" fill="none" stroke="#ddd" stroke-width="1.2"/>
</svg>
<div class="t" style="left:202px;top:403.5px;font-size:10.2px;color:#eee">Voice Over</div>
<!-- ruler -->
<svg class="a" style="left:0;top:0" width="1034" height="450" viewBox="0 0 1034 450">
 <path d="M62.4 429V445.5M69.5 438V445.5M76.5 438V445.5M83.6 438V445.5M90.7 438V445.5M97.8 438V445.5M104.8 438V445.5M111.9 438V445.5M119.0 438V445.5M126.1 438V445.5M133.1 438V445.5M140.2 438V445.5M147.3 438V445.5M154.4 438V445.5M161.4 438V445.5M168.5 429V445.5M175.6 438V445.5M182.6 438V445.5M189.7 438V445.5M196.8 438V445.5M203.9 438V445.5M210.9 438V445.5M218.0 438V445.5M225.1 438V445.5M232.2 438V445.5M239.2 438V445.5M246.3 438V445.5M253.4 438V445.5M260.5 438V445.5M267.5 438V445.5M274.6 429V445.5M281.7 438V445.5M288.7 438V445.5M295.8 438V445.5M302.9 438V445.5M310.0 438V445.5M317.0 438V445.5M324.1 438V445.5M331.2 438V445.5M338.3 438V445.5M345.3 438V445.5M352.4 438V445.5M359.5 438V445.5M366.6 438V445.5M373.6 438V445.5M380.7 429V445.5M387.8 438V445.5M394.8 438V445.5M401.9 438V445.5M409.0 438V445.5M416.1 438V445.5M423.1 438V445.5M430.2 438V445.5M437.3 438V445.5M444.4 438V445.5M451.4 438V445.5M458.5 438V445.5M465.6 438V445.5M472.7 438V445.5M479.7 438V445.5M486.8 429V445.5M493.9 438V445.5M500.9 438V445.5M508.0 438V445.5M515.1 438V445.5M522.2 438V445.5M529.2 438V445.5M536.3 438V445.5M543.4 438V445.5M550.5 438V445.5M557.5 438V445.5M564.6 438V445.5M571.7 438V445.5M578.8 438V445.5M585.8 438V445.5M592.9 429V445.5M600.0 438V445.5M607.0 438V445.5M614.1 438V445.5M621.2 438V445.5M628.3 438V445.5M635.3 438V445.5M642.4 438V445.5M649.5 438V445.5M656.6 438V445.5M663.6 438V445.5M670.7 438V445.5M677.8 438V445.5M684.9 438V445.5M691.9 438V445.5M699.0 429V445.5M706.1 438V445.5M713.1 438V445.5M720.2 438V445.5M727.3 438V445.5M734.4 438V445.5M741.4 438V445.5M748.5 438V445.5M755.6 438V445.5M762.7 438V445.5M769.7 438V445.5M776.8 438V445.5M783.9 438V445.5M791.0 438V445.5M798.0 438V445.5M805.1 429V445.5M812.2 438V445.5M819.2 438V445.5M826.3 438V445.5M833.4 438V445.5M840.5 438V445.5M847.5 438V445.5M854.6 438V445.5M861.7 438V445.5M868.8 438V445.5M875.8 438V445.5M882.9 438V445.5M890.0 438V445.5M897.1 438V445.5M904.1 438V445.5M911.2 429V445.5M918.3 438V445.5M925.3 438V445.5M932.4 438V445.5M939.5 438V445.5M946.6 438V445.5M953.6 438V445.5M960.7 438V445.5M967.8 438V445.5M974.9 438V445.5M981.9 438V445.5M989.0 438V445.5M996.1 438V445.5M1003.2 438V445.5M1010.2 438V445.5M1017.3 429V445.5M1024.4 438V445.5M1031.4 438V445.5" stroke="#9a9a9a" stroke-width="1"/>
 <path d="M62.4 445.5 H1034" stroke="#8a8a8a" stroke-width="1"/>
</svg>
<div class="t" style="left:64.4px;top:427.7px;font-size:8px;color:#a8a8a8">00:00:00.000</div><div class="t" style="left:170.5px;top:427.7px;font-size:8px;color:#a8a8a8">00:00:15.000</div><div class="t" style="left:276.6px;top:427.7px;font-size:8px;color:#a8a8a8">00:00:30.000</div><div class="t" style="left:382.7px;top:427.7px;font-size:8px;color:#a8a8a8">00:00:45.000</div><div class="t" style="left:488.8px;top:427.7px;font-size:8px;color:#a8a8a8">00:01:00.000</div><div class="t" style="left:594.9px;top:427.7px;font-size:8px;color:#a8a8a8">00:01:15.000</div><div class="t" style="left:701.0px;top:427.7px;font-size:8px;color:#a8a8a8">00:01:30.000</div><div class="t" style="left:807.1px;top:427.7px;font-size:8px;color:#a8a8a8">00:01:45.000</div><div class="t" style="left:913.2px;top:427.7px;font-size:8px;color:#a8a8a8">00:02:00.000</div><div class="t" style="left:1019.3px;top:427.7px;font-size:8px;color:#a8a8a8">00:02:15.000</div>
<!-- tracks -->
<div class="a" style="left:0;top:449.3px;width:1034px;height:51.4px;background:#1c1c1c"></div>
<div class="a" style="left:0;top:500.7px;width:1034px;height:5.3px;background:#313131"></div>
<div class="a" style="left:0;top:506px;width:1034px;height:51.3px;background:#1c1c1c"></div>
<div class="a" style="left:0;top:557.3px;width:1034px;height:78.7px;background:#313131"></div>
<div class="a" style="left:4px;top:450px;width:16px;height:50px;background:#242424"></div>
<div class="a" style="left:22px;top:450px;width:24.5px;height:50px;background:#262626"></div>
<div class="a" style="left:4px;top:507px;width:16px;height:50px;background:#242424"></div>
<div class="a" style="left:22px;top:507px;width:24.5px;height:50px;background:#262626"></div>
<svg class="a" style="left:0;top:450px" width="50" height="110" viewBox="0 0 50 110">
 <g fill="none" stroke="#505050" stroke-width="1">
  <path d="M9.5 10 L12 7.5 L14.5 10 M9.5 39 L12 41.5 L14.5 39"/>
  <path d="M9.5 66 L12 63.5 L14.5 66 M9.5 95 L12 97.5 L14.5 95"/>
 </g>
 <g fill="#555">
  <circle cx="10.5" cy="21" r="0.8"/><circle cx="13.5" cy="21" r="0.8"/><circle cx="10.5" cy="24" r="0.8"/><circle cx="13.5" cy="24" r="0.8"/><circle cx="10.5" cy="27" r="0.8"/><circle cx="13.5" cy="27" r="0.8"/>
  <circle cx="10.5" cy="77" r="0.8"/><circle cx="13.5" cy="77" r="0.8"/><circle cx="10.5" cy="80" r="0.8"/><circle cx="13.5" cy="80" r="0.8"/><circle cx="10.5" cy="83" r="0.8"/><circle cx="13.5" cy="83" r="0.8"/>
 </g>
 <g fill="none" stroke="#bdbdbd" stroke-width="0.9">
  <path d="M31.5 19.5 H33 L35 18 V24 L33 22.5 H31.5 Z M36.5 19.5 Q37.5 21 36.5 22.5"/>
  <path d="M32 37.5 H37 M33 38 V42.5 H36 V38 M33.5 37.5 V36.5 H35.5 V37.5"/>
  <path d="M31.5 75.5 H33 L35 74 V80 L33 78.5 H31.5 Z M36.5 75.5 Q37.5 77 36.5 78.5"/>
  <path d="M32 93.5 H37 M33 94 V98.5 H36 V94 M33.5 93.5 V92.5 H35.5 V93.5"/>
 </g>
</svg>
<!-- clip -->
<div class="a" style="left:151.2px;top:451px;width:70.5px;height:49px;border-radius:3px;background:#5a6ee4"></div>
<svg class="a" style="left:158px;top:452px" width="56" height="42" viewBox="0 0 56 42" preserveAspectRatio="none">
 <defs><linearGradient id="csky" x1="0" y1="0" x2="0" y2="1"><stop offset="0" stop-color="#cfd2d8"/><stop offset="0.3" stop-color="#b5babf"/><stop offset="0.5" stop-color="#7d8486"/><stop offset="0.62" stop-color="#5a5f58"/><stop offset="1" stop-color="#6d6247"/></linearGradient></defs>
 <rect width="56" height="42" fill="url(#csky)"/>
 <rect y="26" width="56" height="16" fill="#7a6b4b"/><path d="M1 22 Q10 18 20 21 Q32 19 44 22 Q52 20 55 24 L54 31 Q30 34 2 31 Z" fill="#b3a898"/><path d="M10 21 Q14 17 19 19 L16 23 Z" fill="#3d3430"/>
</svg>
<div class="a" style="left:158px;top:494px;width:56px;height:5.5px;background:#42eeb6"></div>
<div class="a" style="left:154.5px;top:462px;width:2px;height:25px;background:#f0f0f0"></div>
<div class="a" style="left:216.5px;top:462px;width:2px;height:25px;background:#f0f0f0"></div>
<!-- playhead -->
<div class="a" style="left:153.5px;top:500.7px;width:1.2px;height:135px;background:#1f3550"></div>
<div class="a" style="left:151px;top:437px;width:1.3px;height:199px;background:#c5763a"></div>
<div class="a" style="left:122.8px;top:425.7px;width:57.1px;height:12.2px;border-radius:6px;background:#c4773a"></div>
<div class="t" style="left:122.8px;width:57.1px;text-align:center;top:428px;font-size:8px;color:#ffffff">00:00:12.578</div>
<!-- scrollbar -->
<div class="a" style="left:0;top:636px;width:1034px;height:7px;background:#5a5a5a"></div>
<div class="a" style="left:0;top:636px;width:77px;height:4px;background:#2f2f2f"></div>
<!-- bottom bar -->
<div class="a" style="left:0;top:643px;width:1034px;height:41px;background:#313131"></div>
<div class="a" style="left:6.7px;top:651px;width:179px;height:27px;background:#4a4a4a;border:1px solid #555"></div>
<div class="a" style="left:35.4px;top:651px;width:1px;height:27px;background:#5a5a5a"></div>
<div class="a" style="left:157.8px;top:651px;width:1px;height:27px;background:#5a5a5a"></div>
<div class="a" style="left:14.5px;top:663.5px;width:10px;height:2px;background:#f0f0f0"></div>
<div class="a" style="left:43px;top:663.5px;width:35px;height:1px;background:#9a9a9a"></div>
<div class="a" style="left:78px;top:663.5px;width:71px;height:1px;background:#444"></div>
<div class="a" style="left:73.5px;top:658.8px;width:10.5px;height:10.5px;border-radius:50%;background:#fafafa"></div>
<div class="a" style="left:165.5px;top:663.5px;width:11px;height:2px;background:#f0f0f0"></div>
<div class="a" style="left:170px;top:659px;width:2px;height:11px;background:#f0f0f0"></div>
<div class="t" style="left:493.8px;top:658px;font-size:13.2px;color:#9a9a9a">Duration: <span style="color:#f2f2f2">0 h. 0 m. 22 s.</span></div>
<div class="a" style="left:952px;top:651.4px;width:73.5px;height:25.5px;border-radius:2px;background:#5468e4"></div>
<div class="t" style="left:952px;width:73.5px;text-align:center;top:656.5px;font-size:14.5px;color:#fff">Publish</div>
</div>

<div class="card" style="left:547px;top:43px;width:112px;height:112px;transform:rotate(-1.5deg)">
 <svg class="a" style="left:0;top:0" width="112" height="112" viewBox="0 0 112 112">
  <circle cx="50.7" cy="55.4" r="6.3" fill="none" stroke="#dfe1e5" stroke-width="3"/>
  <path d="M56.8 50.5 L60.5 28.5 L74 36.5 L73 44 L61.3 38" fill="none" stroke="#dfe1e5" stroke-width="3" stroke-linejoin="round"/>
 </svg>
 <div class="t" style="left:0;width:112px;text-align:center;top:74.5px;font-size:18.5px;letter-spacing:0.3px;color:#e6e8eb">Audio</div>
</div>

<div class="a" style="left:8px;top:344px;width:247px;height:112px;border-radius:22px;overflow:hidden;background:linear-gradient(90deg,#6d7479,#5f676e);box-shadow:0 8px 14px rgba(60,60,60,0.25)">
 <div class="a" style="left:0;top:0;width:22px;height:112px;background:#4e5ff2"></div>
 <svg class="a" style="left:0;top:0" width="247" height="112" viewBox="0 0 247 112">
  <rect x="39" y="37" width="12" height="24" rx="6" fill="none" stroke="#d8dadd" stroke-width="2"/>
  <path d="M35 49 Q35 65 45 65 Q55 65 55 49 M45 65 V72 M39 72 H51" fill="none" stroke="#d8dadd" stroke-width="2"/>
  <g fill="#9a9ea3">
   <rect x="66" y="97" width="4" height="15"/><rect x="78" y="89" width="4" height="23"/><rect x="90" y="81" width="4" height="31"/>
   <rect x="102.5" y="91" width="4" height="21"/><rect x="114.5" y="84" width="4" height="28"/><rect x="126.5" y="75" width="4" height="37"/>
   <rect x="138.5" y="91" width="4" height="21"/><rect x="151" y="99" width="4" height="13"/><rect x="163" y="91" width="4" height="21"/>
   <rect x="175" y="84" width="4" height="28"/><rect x="187" y="91" width="4" height="21"/>
  </g>
 </svg>
 <div class="t" style="left:78px;top:47px;font-size:18px;color:#eceef0">Voice_2023-06-17</div>
</div>

<svg class="a" style="left:0;top:0" width="1590" height="910" viewBox="0 0 1590 910">
 <g fill="none" stroke="#4f58d2" stroke-width="2.6" stroke-dasharray="8 8">
  <path d="M808.5 96 C825 62 865 38 907 53" stroke-dasharray="9.5 8.5"/>
  <path d="M105 462 Q102 525 152 537"/>
</g>
 <path d="M1458 388 Q1500 425 1470 488" fill="none" stroke="#4b56d8" stroke-width="2" stroke-dasharray="6 6"/>
 <circle cx="787" cy="143" r="7" fill="#111126"/>
 <circle cx="1441" cy="381" r="8" fill="#4b5df2"/>
 <path id="star" d="M0 -11 L3.2 -3.5 L11 -3.4 L5 1.8 L7 10 L0 5.5 L-7 10 L-5 1.8 L-11 -3.4 L-3.2 -3.5 Z" fill="#4b5df2" transform="translate(806 137) rotate(-12)"/>
 <path d="M0 -11 L3.2 -3.5 L11 -3.4 L5 1.8 L7 10 L0 5.5 L-7 10 L-5 1.8 L-11 -3.4 L-3.2 -3.5 Z" fill="#4b5df2" transform="translate(186 533) scale(0.85) rotate(-5)"/>
</svg>

<!-- singer photo -->
<div class="a" style="left:730px;top:626px;width:92px;height:158px;border-radius:10px;overflow:hidden;background:#ecdcdc;box-shadow:0 4px 10px rgba(0,0,0,0.35)">
 <svg class="a" style="left:0;top:0" width="92" height="158" viewBox="0 0 92 158">
  <defs>
   <linearGradient id="sbg" x1="0" y1="0" x2="1" y2="0"><stop offset="0" stop-color="#e6d8d8"/><stop offset="1" stop-color="#eee3e3"/></linearGradient>
   <linearGradient id="skin" x1="0" y1="0" x2="0" y2="1"><stop offset="0" stop-color="#dcab8e"/><stop offset="1" stop-color="#c99276"/></linearGradient>
   <filter id="sb"><feGaussianBlur stdDeviation="0.7"/></filter>
  </defs>
  <rect width="92" height="158" fill="url(#sbg)"/>
  <g filter="url(#sb)">
  <!-- blazer -->
  <path d="M0 82 Q10 66 26 62 L44 64 L62 62 Q82 66 90 88 L92 158 L0 158 Z" fill="#b6aaa3"/>
  <path d="M60 64 Q84 72 92 100 L92 158 L66 158 Q70 120 56 96 Z" fill="#c2b7b0"/>
  <path d="M0 82 Q8 70 22 66 L30 100 Q20 130 18 158 L0 158 Z" fill="#aca098"/>
  <path d="M36 100 L50 100 L52 158 L34 158 Z" fill="#e4dcdc"/>
  <!-- hair -->
  <path d="M20 42 Q18 4 46 2 Q74 4 73 40 L72 62 Q62 58 58 50 L30 50 Q26 58 22 60 Z" fill="#221c1b"/>
  <!-- face -->
  <path d="M28 21 Q31 9 45 9 Q59 10 61 23 Q62 40 57 50 Q50 57 43 56 Q33 53 30 44 Q27 34 28 21 Z" fill="url(#skin)"/>
  <path d="M37 44 Q45 49 52 44 Q45 47 37 44 Z" fill="#f4eeee"/>
  <path d="M32 31 Q36 29 40 31 M47 29 Q51 27 55 29" stroke="#5a3a30" stroke-width="1.2" fill="none"/>
  <!-- headphones -->
  <rect x="19" y="29" width="9" height="22" rx="4" fill="#262020"/>
  <rect x="63" y="23" width="10" height="26" rx="4" fill="#262020"/>
  <!-- hands -->
  <path d="M14 42 Q12 54 20 64 L27 60 Q24 50 25 42 Z" fill="#cf9f84"/>
  <path d="M70 30 Q80 42 78 60 L70 62 Q72 48 66 36 Z" fill="#cf9f84"/>
  <!-- pop filter -->
  <ellipse cx="40" cy="76" rx="21" ry="19" fill="#2a2525"/>
  <ellipse cx="40" cy="76" rx="17" ry="15" fill="#4a4040" opacity="0.6"/>
  <!-- mic -->
  <path d="M29 60 Q40 52 52 60 L52 80 Q40 86 29 80 Z" fill="#9c8f88"/>
  <path d="M28 88 Q40 100 54 88 L52 108 Q40 116 30 108 Z" fill="none" stroke="#cfc8c4" stroke-width="1.6"/><rect x="35" y="82" width="12" height="10" fill="#d8d0cc"/>
  <path d="M39.5 84 L47.5 84 L48 158 L40 158 Z" fill="#ece8e4"/>
  <path d="M24 92 L58 92" stroke="#bdb5b0" stroke-width="1.5"/>
  <path d="M30 112 L31 134 M52 122 L58 142" stroke="#2a2525" stroke-width="1.6"/>
  <path d="M30 120 Q32 140 28 158" fill="none" stroke="#2a2a2a" stroke-width="1.5"/>
  </g>
 </svg>
</div>
<!-- waveform card -->
<div class="a" style="left:833px;top:626.5px;width:625px;height:157px;border-radius:11px;border:2px solid #0e0e0e;background:#fcf3fc;overflow:hidden;box-shadow:0 7px 10px rgba(0,0,0,0.28)">
 <div class="a" style="left:99.5px;top:0;width:40.5px;height:157px;background:#6c8ef5"></div>
 <svg class="a" style="left:0;top:0" width="625" height="157" viewBox="0 0 625 157">
  <polygon points="0.0,64.1 2.0,63.6 4.0,62.3 6.0,65.1 8.0,64.8 10.0,63.0 12.0,60.8 14.0,64.0 16.0,60.9 18.0,60.7 20.0,60.4 22.0,62.2 24.0,61.8 26.0,62.3 28.0,65.6 30.0,64.6 32.0,65.1 34.0,63.7 36.0,66.4 38.0,65.4 40.0,67.1 42.0,65.5 44.0,67.4 46.0,66.0 48.0,67.5 50.0,67.7 52.0,67.3 54.0,67.1 56.0,68.6 58.0,67.6 60.0,68.6 62.0,69.3 64.0,69.0 66.0,69.3 68.0,70.6 70.0,71.0 72.0,70.7 74.0,72.1 76.0,71.9 78.0,70.7 80.0,71.5 82.0,72.0 84.0,71.9 86.0,71.3 88.0,70.7 90.0,69.0 92.0,69.4 94.0,68.0 96.0,69.1 98.0,67.7 100.0,68.5 102.0,66.2 104.0,66.8 106.0,67.4 108.0,67.2 110.0,65.8 112.0,64.0 114.0,65.9 116.0,64.6 118.0,63.1 120.0,65.1 122.0,64.2 124.0,62.6 126.0,65.1 128.0,64.8 130.0,66.0 132.0,63.4 134.0,62.9 136.0,62.4 138.0,62.4 140.0,63.6 142.0,61.6 144.0,61.2 146.0,63.5 148.0,62.4 150.0,60.9 152.0,62.0 154.0,61.5 156.0,63.7 158.0,62.6 160.0,62.8 162.0,63.7 164.0,61.6 166.0,61.5 168.0,63.2 170.0,62.9 172.0,61.4 174.0,61.3 176.0,60.0 178.0,65.0 180.0,61.6 182.0,62.5 184.0,63.8 186.0,66.0 188.0,63.0 190.0,64.1 192.0,66.4 194.0,67.5 196.0,65.8 198.0,67.8 200.0,67.1 202.0,68.1 204.0,67.2 206.0,69.0 208.0,69.2 210.0,68.8 212.0,69.0 214.0,68.8 216.0,67.7 218.0,68.7 220.0,69.1 222.0,70.0 224.0,69.4 226.0,69.7 228.0,69.1 230.0,69.5 232.0,70.7 234.0,68.2 236.0,69.3 238.0,70.2 240.0,69.6 242.0,69.9 244.0,69.4 246.0,71.2 248.0,70.8 250.0,70.5 252.0,70.6 254.0,70.0 256.0,69.4 258.0,71.0 260.0,70.0 262.0,70.1 264.0,69.6 266.0,69.7 268.0,68.6 270.0,70.8 272.0,68.7 274.0,70.7 276.0,69.5 278.0,67.8 280.0,70.2 282.0,69.1 284.0,69.4 286.0,69.7 288.0,70.4 290.0,71.4 292.0,69.9 294.0,71.0 296.0,72.4 298.0,71.5 300.0,72.4 302.0,73.9 304.0,74.1 306.0,74.7 308.0,75.9 310.0,75.9 312.0,75.9 314.0,76.4 316.0,76.5 318.0,76.4 320.0,76.3 322.0,76.4 324.0,76.3 326.0,75.6 328.0,74.6 330.0,73.9 332.0,72.8 334.0,72.1 336.0,71.4 338.0,69.0 340.0,69.2 342.0,66.3 344.0,65.5 346.0,64.7 348.0,62.0 350.0,63.1 352.0,64.0 354.0,64.5 356.0,60.9 358.0,61.5 360.0,62.0 362.0,65.0 364.0,63.4 366.0,67.2 368.0,67.8 370.0,67.8 372.0,70.1 374.0,69.9 376.0,70.1 378.0,72.0 380.0,72.1 382.0,72.6 384.0,74.2 386.0,75.1 388.0,75.3 390.0,75.6 392.0,75.6 394.0,76.0 396.0,76.1 398.0,76.6 400.0,76.5 402.0,76.5 404.0,76.4 406.0,75.9 408.0,76.2 410.0,75.6 412.0,75.5 414.0,75.6 416.0,75.2 418.0,75.1 420.0,75.1 422.0,74.1 424.0,73.9 426.0,74.7 428.0,74.5 430.0,74.2 432.0,73.7 434.0,73.9 436.0,73.6 438.0,72.4 440.0,71.9 442.0,71.3 444.0,72.4 446.0,71.8 448.0,71.1 450.0,71.1 452.0,70.2 454.0,70.8 456.0,69.2 458.0,69.0 460.0,69.5 462.0,68.1 464.0,67.0 466.0,66.9 468.0,66.6 470.0,67.7 472.0,66.8 474.0,66.8 476.0,68.4 478.0,65.0 480.0,67.7 482.0,64.2 484.0,67.4 486.0,64.5 488.0,64.6 490.0,63.3 492.0,66.1 494.0,61.8 496.0,64.0 498.0,63.9 500.0,61.6 502.0,62.2 504.0,63.1 506.0,62.3 508.0,59.8 510.0,63.2 512.0,61.3 514.0,61.8 516.0,59.8 518.0,60.2 520.0,57.9 522.0,61.2 524.0,60.4 526.0,58.2 528.0,58.9 530.0,57.5 532.0,60.5 534.0,55.9 536.0,59.5 538.0,55.6 540.0,60.6 542.0,56.6 544.0,56.4 546.0,59.3 548.0,56.4 550.0,55.8 552.0,57.7 554.0,60.3 556.0,59.7 558.0,55.1 560.0,54.8 562.0,54.8 564.0,56.1 566.0,59.4 568.0,56.4 570.0,56.1 572.0,57.8 574.0,59.9 576.0,54.7 578.0,59.5 580.0,60.3 582.0,59.5 584.0,57.3 586.0,57.1 588.0,57.4 590.0,60.3 592.0,60.4 594.0,56.1 596.0,57.8 598.0,58.9 600.0,59.2 602.0,55.1 604.0,57.4 606.0,58.5 608.0,55.9 610.0,61.7 612.0,59.7 614.0,61.4 616.0,58.4 618.0,62.7 620.0,58.7 620.0,96.6 618.0,95.4 616.0,95.6 614.0,95.7 612.0,95.2 610.0,99.7 608.0,101.3 606.0,96.9 604.0,101.1 602.0,98.7 600.0,100.9 598.0,99.5 596.0,97.1 594.0,101.9 592.0,98.1 590.0,97.6 588.0,102.2 586.0,101.1 584.0,99.8 582.0,97.1 580.0,98.3 578.0,98.5 576.0,96.8 574.0,98.1 572.0,98.7 570.0,102.3 568.0,101.9 566.0,97.2 564.0,102.3 562.0,97.2 560.0,98.5 558.0,102.4 556.0,97.6 554.0,102.0 552.0,98.6 550.0,96.2 548.0,98.9 546.0,99.5 544.0,98.1 542.0,97.7 540.0,100.3 538.0,97.8 536.0,100.8 534.0,97.5 532.0,97.6 530.0,96.5 528.0,95.4 526.0,99.4 524.0,98.9 522.0,96.2 520.0,95.2 518.0,95.4 516.0,95.1 514.0,94.7 512.0,97.3 510.0,94.3 508.0,93.6 506.0,93.7 504.0,95.5 502.0,94.5 500.0,93.0 498.0,91.5 496.0,92.7 494.0,94.6 492.0,94.0 490.0,90.3 488.0,93.1 486.0,91.8 484.0,92.7 482.0,89.3 480.0,92.1 478.0,88.7 476.0,90.1 474.0,91.2 472.0,89.9 470.0,89.6 468.0,87.5 466.0,89.9 464.0,89.9 462.0,89.6 460.0,87.6 458.0,86.8 456.0,88.9 454.0,87.3 452.0,86.9 450.0,87.1 448.0,86.2 446.0,85.9 444.0,85.6 442.0,85.2 440.0,85.5 438.0,85.3 436.0,83.3 434.0,84.0 432.0,84.1 430.0,84.0 428.0,83.1 426.0,83.3 424.0,82.8 422.0,81.9 420.0,81.8 418.0,81.9 416.0,82.0 414.0,81.3 412.0,81.0 410.0,81.0 408.0,80.6 406.0,81.0 404.0,80.7 402.0,80.6 400.0,80.4 398.0,80.8 396.0,81.1 394.0,81.0 392.0,81.2 390.0,81.3 388.0,81.7 386.0,82.5 384.0,82.8 382.0,84.2 380.0,84.2 378.0,86.2 376.0,86.4 374.0,87.9 372.0,88.7 370.0,89.4 368.0,89.2 366.0,92.4 364.0,93.7 362.0,95.6 360.0,93.9 358.0,94.9 356.0,92.2 354.0,93.4 352.0,95.4 350.0,94.0 348.0,94.8 346.0,92.1 344.0,90.5 342.0,89.2 340.0,87.2 338.0,87.6 336.0,85.7 334.0,85.6 332.0,85.1 330.0,83.4 328.0,82.7 326.0,81.3 324.0,80.9 322.0,80.5 320.0,80.4 318.0,80.3 316.0,80.1 314.0,80.4 312.0,80.8 310.0,81.3 308.0,81.5 306.0,81.9 304.0,82.0 302.0,83.2 300.0,83.4 298.0,84.7 296.0,85.0 294.0,85.0 292.0,86.7 290.0,85.8 288.0,87.7 286.0,86.5 284.0,87.8 282.0,88.8 280.0,88.8 278.0,89.0 276.0,88.3 274.0,88.3 272.0,87.8 270.0,88.7 268.0,87.6 266.0,87.2 264.0,85.7 262.0,85.5 260.0,87.0 258.0,85.9 256.0,87.3 254.0,85.5 252.0,86.1 250.0,87.6 248.0,87.5 246.0,86.2 244.0,85.8 242.0,87.1 240.0,86.7 238.0,87.6 236.0,87.1 234.0,87.2 232.0,87.9 230.0,89.1 228.0,86.5 226.0,88.8 224.0,88.1 222.0,87.8 220.0,87.4 218.0,88.4 216.0,87.0 214.0,87.0 212.0,88.2 210.0,88.4 208.0,88.1 206.0,89.3 204.0,88.3 202.0,88.7 200.0,90.1 198.0,89.8 196.0,89.2 194.0,89.0 192.0,89.4 190.0,89.7 188.0,92.6 186.0,91.8 184.0,91.0 182.0,92.0 180.0,95.0 178.0,92.7 176.0,94.3 174.0,96.9 172.0,95.0 170.0,98.4 168.0,97.6 166.0,97.6 164.0,96.0 162.0,94.1 160.0,95.1 158.0,96.8 156.0,95.4 154.0,93.3 152.0,93.1 150.0,93.7 148.0,92.6 146.0,94.4 144.0,91.8 142.0,95.8 140.0,91.3 138.0,91.7 136.0,94.2 134.0,92.0 132.0,93.5 130.0,91.4 128.0,93.7 126.0,91.0 124.0,91.1 122.0,91.0 120.0,91.7 118.0,90.2 116.0,92.6 114.0,92.8 112.0,93.0 110.0,92.5 108.0,91.1 106.0,90.0 104.0,89.6 102.0,87.8 100.0,90.3 98.0,89.2 96.0,87.9 94.0,86.7 92.0,86.4 90.0,87.3 88.0,87.5 86.0,86.1 84.0,86.8 82.0,85.3 80.0,85.4 78.0,84.9 76.0,85.5 74.0,85.6 72.0,85.9 70.0,86.9 68.0,87.6 66.0,87.2 64.0,86.5 62.0,86.9 60.0,87.1 58.0,87.7 56.0,88.5 54.0,88.6 52.0,89.0 50.0,88.4 48.0,89.3 46.0,91.2 44.0,92.5 42.0,90.5 40.0,93.1 38.0,90.3 36.0,92.9 34.0,91.1 32.0,93.3 30.0,93.8 28.0,92.8 26.0,93.6 24.0,92.7 22.0,96.0 20.0,92.9 18.0,92.3 16.0,95.0 14.0,94.0 12.0,92.8 10.0,96.5 8.0,91.9 6.0,92.9 4.0,94.2 2.0,92.5 0.0,93.1" fill="#c2b0da" opacity="0.9"/>
  <path d="M0.0 58.8V94.5M1.5 63.6V96.2M3.0 62.5V96.6M4.5 65.2V87.8M6.0 49.2V107.3M7.5 45.1V114.7M9.0 47.6V115.8M10.5 57.4V101.3M12.0 53.6V103.4M13.5 54.3V101.5M15.0 46.4V118.2M16.5 56.8V92.4M18.0 63.4V97.5M19.5 41.3V107.4M21.0 62.4V93.3M22.5 67.7V89.1M24.0 52.6V103.0M25.5 66.6V94.2M27.0 67.3V90.1M28.5 54.2V110.7M30.0 61.8V93.7M31.5 68.1V89.2M33.0 58.4V96.1M34.5 68.4V90.6M36.0 59.4V93.9M37.5 63.2V93.6M39.0 58.7V97.6M40.5 61.7V102.8M42.0 58.0V95.6M43.5 70.2V89.0M45.0 65.7V89.4M46.5 70.0V87.9M48.0 62.2V92.3M49.5 63.7V95.7M51.0 59.1V100.0M52.5 67.3V90.1M54.0 62.7V90.9M55.5 44.6V116.5M57.0 71.1V86.8M58.5 70.3V89.1M60.0 62.4V94.3M61.5 65.1V94.3M63.0 64.0V95.8M64.5 63.3V91.9M66.0 69.5V90.7M67.5 62.0V92.5M69.0 66.7V92.8M70.5 73.6V85.2M72.0 68.0V88.0M73.5 69.4V86.4M75.0 72.0V84.9M76.5 66.7V93.0M78.0 72.2V85.7M79.5 65.7V88.7M81.0 70.9V87.8M82.5 65.5V92.9M84.0 71.0V85.3M85.5 70.6V85.9M87.0 67.8V86.9M88.5 64.7V98.2M90.0 65.1V87.4M91.5 72.5V87.7M93.0 71.4V88.2M94.5 66.0V91.9M96.0 63.6V95.8M97.5 48.1V101.5M99.0 66.8V89.3M100.5 64.4V95.6M102.0 55.6V99.4M103.5 68.1V90.3M105.0 62.9V93.5M106.5 56.3V96.1M108.0 59.0V98.7M109.5 63.8V93.1M111.0 63.5V98.4M112.5 61.6V99.2M114.0 61.2V91.8M115.5 55.0V104.3M117.0 60.9V100.0M118.5 56.0V103.7M120.0 64.8V93.4M121.5 58.5V97.7M123.0 59.9V94.8M124.5 59.3V92.2M126.0 54.9V102.7M127.5 65.0V92.7M129.0 67.6V88.8M130.5 55.5V103.8M132.0 67.4V92.8M133.5 53.4V99.2M135.0 57.2V96.0M136.5 61.6V97.9M138.0 68.6V89.5M139.5 65.1V92.2M141.0 54.6V95.9M142.5 61.7V98.6M144.0 60.5V97.6M145.5 63.3V93.7M147.0 56.5V103.1M148.5 60.2V97.5M150.0 57.3V93.5M151.5 54.0V104.6M153.0 58.2V108.1M154.5 62.2V97.6M156.0 32.0V129.9M157.5 48.0V112.8M159.0 60.1V95.6M160.5 43.6V114.3M162.0 65.5V96.4M163.5 53.6V102.9M165.0 43.8V106.5M166.5 57.7V101.1M168.0 63.3V89.4M169.5 58.1V96.7M171.0 66.6V97.3M172.5 46.3V107.6M174.0 58.9V102.8M175.5 46.7V108.1M177.0 54.3V109.0M178.5 48.2V108.8M180.0 64.2V95.2M181.5 35.8V120.9M183.0 62.7V91.9M184.5 57.0V98.5M186.0 50.0V107.8M187.5 35.0V112.6M189.0 54.8V98.7M190.5 65.2V91.5M192.0 50.6V102.4M193.5 50.6V97.6M195.0 58.4V95.5M196.5 67.4V96.0M198.0 65.0V90.5M199.5 67.3V88.2M201.0 66.8V92.0M202.5 69.6V86.0M204.0 65.0V100.1M205.5 57.5V100.1M207.0 60.2V100.6M208.5 59.6V96.2M210.0 63.7V92.1M211.5 62.2V98.0M213.0 65.7V93.6M214.5 66.5V93.2M216.0 63.3V92.6M217.5 60.7V94.1M219.0 68.1V89.0M220.5 66.8V90.6M222.0 57.7V92.0M223.5 71.1V86.7M225.0 72.1V84.9M226.5 63.5V91.7M228.0 67.6V91.8M229.5 58.3V97.1M231.0 64.5V91.3M232.5 62.5V97.0M234.0 67.4V90.5M235.5 69.9V91.3M237.0 71.0V85.7M238.5 63.6V88.8M240.0 71.8V86.1M241.5 66.8V89.3M243.0 69.5V86.3M244.5 63.1V94.1M246.0 61.8V91.6M247.5 67.6V89.3M249.0 70.8V86.2M250.5 70.4V88.4M252.0 63.2V92.0M253.5 69.6V85.2M255.0 72.3V84.8M256.5 62.1V89.7M258.0 70.2V86.8M259.5 68.9V91.4M261.0 70.9V84.7M262.5 70.5V87.5M264.0 66.6V89.0M265.5 66.5V90.4M267.0 61.0V94.8M268.5 61.3V96.1M270.0 62.2V96.3M271.5 64.4V90.6M273.0 65.2V90.3M274.5 70.6V89.4M276.0 72.5V86.5M277.5 66.9V93.0M279.0 68.5V88.9M280.5 70.8V88.3M282.0 67.3V90.3M283.5 70.6V87.5M285.0 65.3V96.4M286.5 62.7V97.5M288.0 70.1V91.8M289.5 64.9V92.0M291.0 69.6V85.7M292.5 73.1V85.1M294.0 69.2V87.8M295.5 69.5V86.2M297.0 70.3V88.0M298.5 74.5V84.7M300.0 71.4V86.5M301.5 71.2V85.8M303.0 69.4V85.5M304.5 71.2V83.3M306.0 72.8V84.2M307.5 75.9V81.1M309.0 76.2V81.1M310.5 76.1V81.3M312.0 75.1V81.6M313.5 76.8V79.8M315.0 76.7V81.5M316.5 75.3V81.2M318.0 76.5V80.6M319.5 76.4V80.5M321.0 74.4V81.9M322.5 74.5V81.2M324.0 76.2V80.8M325.5 75.6V81.1M327.0 76.2V80.8M328.5 70.0V87.4M330.0 70.4V85.0M331.5 73.9V84.3M333.0 67.8V88.6M334.5 61.7V98.2M336.0 71.9V86.0M337.5 66.8V94.5M339.0 63.4V94.8M340.5 67.1V87.7M342.0 64.2V99.2M343.5 65.0V93.3M345.0 62.5V99.8M346.5 66.0V97.6M348.0 65.4V91.7M349.5 53.6V104.3M351.0 57.8V108.2M352.5 64.1V95.7M354.0 51.8V99.1M355.5 63.3V93.4M357.0 53.2V104.6M358.5 57.1V92.6M360.0 65.8V93.1M361.5 57.4V96.9M363.0 57.4V93.7M364.5 53.7V99.6M366.0 61.5V96.1M367.5 59.8V102.0M369.0 60.9V96.4M370.5 64.3V92.7M372.0 68.1V87.4M373.5 63.7V92.4M375.0 65.8V88.1M376.5 72.2V84.5M378.0 73.1V83.1M379.5 72.7V83.7M381.0 67.8V90.2M382.5 73.2V85.5M384.0 73.5V85.7M385.5 74.1V81.2M387.0 75.2V81.3M388.5 73.0V83.9M390.0 71.5V83.8M391.5 73.8V82.3M393.0 75.3V81.7M394.5 76.2V80.9M396.0 75.8V80.3M397.5 74.9V80.9M399.0 77.0V80.5M400.5 76.0V81.9M402.0 75.8V81.5M403.5 76.6V80.4M405.0 76.0V80.5M406.5 75.0V81.4M408.0 75.7V80.8M409.5 73.9V82.1M411.0 75.8V82.2M412.5 75.1V80.8M414.0 75.8V81.2M415.5 73.6V83.6M417.0 75.7V80.9M418.5 73.5V84.7M420.0 72.9V84.4M421.5 72.7V83.9M423.0 74.2V84.4M424.5 75.2V82.2M426.0 70.7V84.4M427.5 72.5V84.2M429.0 74.5V82.2M430.5 71.7V84.7M432.0 72.2V84.2M433.5 66.8V90.1M435.0 71.4V86.3M436.5 73.8V83.0M438.0 73.7V85.6M439.5 73.7V84.8M441.0 70.2V88.7M442.5 69.0V84.4M444.0 67.4V85.8M445.5 71.6V86.3M447.0 66.2V90.1M448.5 60.5V94.9M450.0 67.6V91.3M451.5 68.3V86.3M453.0 68.4V85.8M454.5 70.3V88.2M456.0 64.2V94.8M457.5 65.0V89.4M459.0 64.6V91.2M460.5 67.5V89.6M462.0 66.5V93.8M463.5 65.9V92.5M465.0 70.8V85.9M466.5 71.6V85.9M468.0 62.2V95.7M469.5 69.5V89.5M471.0 65.8V93.7M472.5 63.2V90.2M474.0 64.6V95.4M475.5 55.8V95.1M477.0 65.6V88.8M478.5 58.3V98.1M480.0 68.7V90.6M481.5 61.1V91.2M483.0 67.0V88.9M484.5 68.3V89.9M486.0 52.5V107.4M487.5 64.3V94.6M489.0 53.7V97.0M490.5 65.3V94.4M492.0 64.6V91.4M493.5 64.3V97.0M495.0 64.9V92.6M496.5 63.6V92.4M498.0 40.5V110.4M499.5 45.9V109.3M501.0 65.4V94.4M502.5 54.4V108.2M504.0 62.5V97.1M505.5 55.8V99.6M507.0 55.9V101.1M508.5 57.7V94.9M510.0 46.3V107.5M511.5 62.4V95.0M513.0 63.6V91.4M514.5 58.0V102.0M516.0 51.0V105.2M517.5 51.1V106.1M519.0 43.8V112.9M520.5 46.4V101.4M522.0 51.1V103.4M523.5 58.3V95.8M525.0 62.3V98.0M526.5 49.8V118.0M528.0 59.6V95.0M529.5 57.5V92.3M531.0 55.8V97.2M532.5 45.4V105.8M534.0 53.1V103.8M535.5 48.8V107.1M537.0 51.8V109.3M538.5 53.7V100.8M540.0 44.3V101.1M541.5 46.4V107.0M543.0 50.9V118.0M544.5 34.5V127.7M546.0 65.0V96.6M547.5 55.0V108.4M549.0 46.2V114.7M550.5 47.7V114.3M552.0 55.6V101.8M553.5 62.9V96.2M555.0 64.7V97.3M556.5 61.9V94.7M558.0 55.2V99.1M559.5 63.2V91.8M561.0 54.0V95.2M562.5 44.6V119.4M564.0 32.4V123.9M565.5 52.7V105.7M567.0 50.0V100.0M568.5 65.5V91.1M570.0 57.1V102.4M571.5 59.3V90.3M573.0 46.9V109.3M574.5 49.8V106.4M576.0 31.7V114.8M577.5 40.3V102.6M579.0 51.4V105.3M580.5 50.0V111.2M582.0 50.1V100.0M583.5 58.8V93.5M585.0 43.0V105.8M586.5 62.0V95.7M588.0 63.7V92.7M589.5 55.0V111.4M591.0 60.3V106.6M592.5 56.9V102.4M594.0 50.7V112.6M595.5 47.6V112.6M597.0 38.4V113.8M598.5 47.1V113.9M600.0 44.0V114.1M601.5 59.2V95.7M603.0 50.2V104.4M604.5 49.8V100.3M606.0 48.3V108.7M607.5 43.8V122.4M609.0 44.3V116.6M610.5 59.8V107.2M612.0 49.7V105.0M613.5 39.7V112.4M615.0 33.5V114.1M616.5 47.7V114.3M618.0 59.7V92.3M619.5 54.1V99.8" stroke="#bca9d7" stroke-width="1" fill="none" opacity="0.75"/>
  <rect x="99.5" y="60" width="40.5" height="40" fill="#6c8ef5" opacity="0"/>
 </svg>
 <svg class="a" style="left:99.5px;top:0" width="40.5" height="157" viewBox="99.5 0 40.5 157">
  <polygon points="0.0,64.1 2.0,63.6 4.0,62.3 6.0,65.1 8.0,64.8 10.0,63.0 12.0,60.8 14.0,64.0 16.0,60.9 18.0,60.7 20.0,60.4 22.0,62.2 24.0,61.8 26.0,62.3 28.0,65.6 30.0,64.6 32.0,65.1 34.0,63.7 36.0,66.4 38.0,65.4 40.0,67.1 42.0,65.5 44.0,67.4 46.0,66.0 48.0,67.5 50.0,67.7 52.0,67.3 54.0,67.1 56.0,68.6 58.0,67.6 60.0,68.6 62.0,69.3 64.0,69.0 66.0,69.3 68.0,70.6 70.0,71.0 72.0,70.7 74.0,72.1 76.0,71.9 78.0,70.7 80.0,71.5 82.0,72.0 84.0,71.9 86.0,71.3 88.0,70.7 90.0,69.0 92.0,69.4 94.0,68.0 96.0,69.1 98.0,67.7 100.0,68.5 102.0,66.2 104.0,66.8 106.0,67.4 108.0,67.2 110.0,65.8 112.0,64.0 114.0,65.9 116.0,64.6 118.0,63.1 120.0,65.1 122.0,64.2 124.0,62.6 126.0,65.1 128.0,64.8 130.0,66.0 132.0,63.4 134.0,62.9 136.0,62.4 138.0,62.4 140.0,63.6 142.0,61.6 144.0,61.2 146.0,63.5 148.0,62.4 150.0,60.9 152.0,62.0 154.0,61.5 156.0,63.7 158.0,62.6 160.0,62.8 162.0,63.7 164.0,61.6 166.0,61.5 168.0,63.2 170.0,62.9 172.0,61.4 174.0,61.3 176.0,60.0 178.0,65.0 180.0,61.6 182.0,62.5 184.0,63.8 186.0,66.0 188.0,63.0 190.0,64.1 192.0,66.4 194.0,67.5 196.0,65.8 198.0,67.8 200.0,67.1 202.0,68.1 204.0,67.2 206.0,69.0 208.0,69.2 210.0,68.8 212.0,69.0 214.0,68.8 216.0,67.7 218.0,68.7 220.0,69.1 222.0,70.0 224.0,69.4 226.0,69.7 228.0,69.1 230.0,69.5 232.0,70.7 234.0,68.2 236.0,69.3 238.0,70.2 240.0,69.6 242.0,69.9 244.0,69.4 246.0,71.2 248.0,70.8 250.0,70.5 252.0,70.6 254.0,70.0 256.0,69.4 258.0,71.0 260.0,70.0 262.0,70.1 264.0,69.6 266.0,69.7 268.0,68.6 270.0,70.8 272.0,68.7 274.0,70.7 276.0,69.5 278.0,67.8 280.0,70.2 282.0,69.1 284.0,69.4 286.0,69.7 288.0,70.4 290.0,71.4 292.0,69.9 294.0,71.0 296.0,72.4 298.0,71.5 300.0,72.4 302.0,73.9 304.0,74.1 306.0,74.7 308.0,75.9 310.0,75.9 312.0,75.9 314.0,76.4 316.0,76.5 318.0,76.4 320.0,76.3 322.0,76.4 324.0,76.3 326.0,75.6 328.0,74.6 330.0,73.9 332.0,72.8 334.0,72.1 336.0,71.4 338.0,69.0 340.0,69.2 342.0,66.3 344.0,65.5 346.0,64.7 348.0,62.0 350.0,63.1 352.0,64.0 354.0,64.5 356.0,60.9 358.0,61.5 360.0,62.0 362.0,65.0 364.0,63.4 366.0,67.2 368.0,67.8 370.0,67.8 372.0,70.1 374.0,69.9 376.0,70.1 378.0,72.0 380.0,72.1 382.0,72.6 384.0,74.2 386.0,75.1 388.0,75.3 390.0,75.6 392.0,75.6 394.0,76.0 396.0,76.1 398.0,76.6 400.0,76.5 402.0,76.5 404.0,76.4 406.0,75.9 408.0,76.2 410.0,75.6 412.0,75.5 414.0,75.6 416.0,75.2 418.0,75.1 420.0,75.1 422.0,74.1 424.0,73.9 426.0,74.7 428.0,74.5 430.0,74.2 432.0,73.7 434.0,73.9 436.0,73.6 438.0,72.4 440.0,71.9 442.0,71.3 444.0,72.4 446.0,71.8 448.0,71.1 450.0,71.1 452.0,70.2 454.0,70.8 456.0,69.2 458.0,69.0 460.0,69.5 462.0,68.1 464.0,67.0 466.0,66.9 468.0,66.6 470.0,67.7 472.0,66.8 474.0,66.8 476.0,68.4 478.0,65.0 480.0,67.7 482.0,64.2 484.0,67.4 486.0,64.5 488.0,64.6 490.0,63.3 492.0,66.1 494.0,61.8 496.0,64.0 498.0,63.9 500.0,61.6 502.0,62.2 504.0,63.1 506.0,62.3 508.0,59.8 510.0,63.2 512.0,61.3 514.0,61.8 516.0,59.8 518.0,60.2 520.0,57.9 522.0,61.2 524.0,60.4 526.0,58.2 528.0,58.9 530.0,57.5 532.0,60.5 534.0,55.9 536.0,59.5 538.0,55.6 540.0,60.6 542.0,56.6 544.0,56.4 546.0,59.3 548.0,56.4 550.0,55.8 552.0,57.7 554.0,60.3 556.0,59.7 558.0,55.1 560.0,54.8 562.0,54.8 564.0,56.1 566.0,59.4 568.0,56.4 570.0,56.1 572.0,57.8 574.0,59.9 576.0,54.7 578.0,59.5 580.0,60.3 582.0,59.5 584.0,57.3 586.0,57.1 588.0,57.4 590.0,60.3 592.0,60.4 594.0,56.1 596.0,57.8 598.0,58.9 600.0,59.2 602.0,55.1 604.0,57.4 606.0,58.5 608.0,55.9 610.0,61.7 612.0,59.7 614.0,61.4 616.0,58.4 618.0,62.7 620.0,58.7 620.0,96.6 618.0,95.4 616.0,95.6 614.0,95.7 612.0,95.2 610.0,99.7 608.0,101.3 606.0,96.9 604.0,101.1 602.0,98.7 600.0,100.9 598.0,99.5 596.0,97.1 594.0,101.9 592.0,98.1 590.0,97.6 588.0,102.2 586.0,101.1 584.0,99.8 582.0,97.1 580.0,98.3 578.0,98.5 576.0,96.8 574.0,98.1 572.0,98.7 570.0,102.3 568.0,101.9 566.0,97.2 564.0,102.3 562.0,97.2 560.0,98.5 558.0,102.4 556.0,97.6 554.0,102.0 552.0,98.6 550.0,96.2 548.0,98.9 546.0,99.5 544.0,98.1 542.0,97.7 540.0,100.3 538.0,97.8 536.0,100.8 534.0,97.5 532.0,97.6 530.0,96.5 528.0,95.4 526.0,99.4 524.0,98.9 522.0,96.2 520.0,95.2 518.0,95.4 516.0,95.1 514.0,94.7 512.0,97.3 510.0,94.3 508.0,93.6 506.0,93.7 504.0,95.5 502.0,94.5 500.0,93.0 498.0,91.5 496.0,92.7 494.0,94.6 492.0,94.0 490.0,90.3 488.0,93.1 486.0,91.8 484.0,92.7 482.0,89.3 480.0,92.1 478.0,88.7 476.0,90.1 474.0,91.2 472.0,89.9 470.0,89.6 468.0,87.5 466.0,89.9 464.0,89.9 462.0,89.6 460.0,87.6 458.0,86.8 456.0,88.9 454.0,87.3 452.0,86.9 450.0,87.1 448.0,86.2 446.0,85.9 444.0,85.6 442.0,85.2 440.0,85.5 438.0,85.3 436.0,83.3 434.0,84.0 432.0,84.1 430.0,84.0 428.0,83.1 426.0,83.3 424.0,82.8 422.0,81.9 420.0,81.8 418.0,81.9 416.0,82.0 414.0,81.3 412.0,81.0 410.0,81.0 408.0,80.6 406.0,81.0 404.0,80.7 402.0,80.6 400.0,80.4 398.0,80.8 396.0,81.1 394.0,81.0 392.0,81.2 390.0,81.3 388.0,81.7 386.0,82.5 384.0,82.8 382.0,84.2 380.0,84.2 378.0,86.2 376.0,86.4 374.0,87.9 372.0,88.7 370.0,89.4 368.0,89.2 366.0,92.4 364.0,93.7 362.0,95.6 360.0,93.9 358.0,94.9 356.0,92.2 354.0,93.4 352.0,95.4 350.0,94.0 348.0,94.8 346.0,92.1 344.0,90.5 342.0,89.2 340.0,87.2 338.0,87.6 336.0,85.7 334.0,85.6 332.0,85.1 330.0,83.4 328.0,82.7 326.0,81.3 324.0,80.9 322.0,80.5 320.0,80.4 318.0,80.3 316.0,80.1 314.0,80.4 312.0,80.8 310.0,81.3 308.0,81.5 306.0,81.9 304.0,82.0 302.0,83.2 300.0,83.4 298.0,84.7 296.0,85.0 294.0,85.0 292.0,86.7 290.0,85.8 288.0,87.7 286.0,86.5 284.0,87.8 282.0,88.8 280.0,88.8 278.0,89.0 276.0,88.3 274.0,88.3 272.0,87.8 270.0,88.7 268.0,87.6 266.0,87.2 264.0,85.7 262.0,85.5 260.0,87.0 258.0,85.9 256.0,87.3 254.0,85.5 252.0,86.1 250.0,87.6 248.0,87.5 246.0,86.2 244.0,85.8 242.0,87.1 240.0,86.7 238.0,87.6 236.0,87.1 234.0,87.2 232.0,87.9 230.0,89.1 228.0,86.5 226.0,88.8 224.0,88.1 222.0,87.8 220.0,87.4 218.0,88.4 216.0,87.0 214.0,87.0 212.0,88.2 210.0,88.4 208.0,88.1 206.0,89.3 204.0,88.3 202.0,88.7 200.0,90.1 198.0,89.8 196.0,89.2 194.0,89.0 192.0,89.4 190.0,89.7 188.0,92.6 186.0,91.8 184.0,91.0 182.0,92.0 180.0,95.0 178.0,92.7 176.0,94.3 174.0,96.9 172.0,95.0 170.0,98.4 168.0,97.6 166.0,97.6 164.0,96.0 162.0,94.1 160.0,95.1 158.0,96.8 156.0,95.4 154.0,93.3 152.0,93.1 150.0,93.7 148.0,92.6 146.0,94.4 144.0,91.8 142.0,95.8 140.0,91.3 138.0,91.7 136.0,94.2 134.0,92.0 132.0,93.5 130.0,91.4 128.0,93.7 126.0,91.0 124.0,91.1 122.0,91.0 120.0,91.7 118.0,90.2 116.0,92.6 114.0,92.8 112.0,93.0 110.0,92.5 108.0,91.1 106.0,90.0 104.0,89.6 102.0,87.8 100.0,90.3 98.0,89.2 96.0,87.9 94.0,86.7 92.0,86.4 90.0,87.3 88.0,87.5 86.0,86.1 84.0,86.8 82.0,85.3 80.0,85.4 78.0,84.9 76.0,85.5 74.0,85.6 72.0,85.9 70.0,86.9 68.0,87.6 66.0,87.2 64.0,86.5 62.0,86.9 60.0,87.1 58.0,87.7 56.0,88.5 54.0,88.6 52.0,89.0 50.0,88.4 48.0,89.3 46.0,91.2 44.0,92.5 42.0,90.5 40.0,93.1 38.0,90.3 36.0,92.9 34.0,91.1 32.0,93.3 30.0,93.8 28.0,92.8 26.0,93.6 24.0,92.7 22.0,96.0 20.0,92.9 18.0,92.3 16.0,95.0 14.0,94.0 12.0,92.8 10.0,96.5 8.0,91.9 6.0,92.9 4.0,94.2 2.0,92.5 0.0,93.1" fill="#e0b5bf"/>
  <path d="M0.0 58.8V94.5M1.5 63.6V96.2M3.0 62.5V96.6M4.5 65.2V87.8M6.0 49.2V107.3M7.5 45.1V114.7M9.0 47.6V115.8M10.5 57.4V101.3M12.0 53.6V103.4M13.5 54.3V101.5M15.0 46.4V118.2M16.5 56.8V92.4M18.0 63.4V97.5M19.5 41.3V107.4M21.0 62.4V93.3M22.5 67.7V89.1M24.0 52.6V103.0M25.5 66.6V94.2M27.0 67.3V90.1M28.5 54.2V110.7M30.0 61.8V93.7M31.5 68.1V89.2M33.0 58.4V96.1M34.5 68.4V90.6M36.0 59.4V93.9M37.5 63.2V93.6M39.0 58.7V97.6M40.5 61.7V102.8M42.0 58.0V95.6M43.5 70.2V89.0M45.0 65.7V89.4M46.5 70.0V87.9M48.0 62.2V92.3M49.5 63.7V95.7M51.0 59.1V100.0M52.5 67.3V90.1M54.0 62.7V90.9M55.5 44.6V116.5M57.0 71.1V86.8M58.5 70.3V89.1M60.0 62.4V94.3M61.5 65.1V94.3M63.0 64.0V95.8M64.5 63.3V91.9M66.0 69.5V90.7M67.5 62.0V92.5M69.0 66.7V92.8M70.5 73.6V85.2M72.0 68.0V88.0M73.5 69.4V86.4M75.0 72.0V84.9M76.5 66.7V93.0M78.0 72.2V85.7M79.5 65.7V88.7M81.0 70.9V87.8M82.5 65.5V92.9M84.0 71.0V85.3M85.5 70.6V85.9M87.0 67.8V86.9M88.5 64.7V98.2M90.0 65.1V87.4M91.5 72.5V87.7M93.0 71.4V88.2M94.5 66.0V91.9M96.0 63.6V95.8M97.5 48.1V101.5M99.0 66.8V89.3M100.5 64.4V95.6M102.0 55.6V99.4M103.5 68.1V90.3M105.0 62.9V93.5M106.5 56.3V96.1M108.0 59.0V98.7M109.5 63.8V93.1M111.0 63.5V98.4M112.5 61.6V99.2M114.0 61.2V91.8M115.5 55.0V104.3M117.0 60.9V100.0M118.5 56.0V103.7M120.0 64.8V93.4M121.5 58.5V97.7M123.0 59.9V94.8M124.5 59.3V92.2M126.0 54.9V102.7M127.5 65.0V92.7M129.0 67.6V88.8M130.5 55.5V103.8M132.0 67.4V92.8M133.5 53.4V99.2M135.0 57.2V96.0M136.5 61.6V97.9M138.0 68.6V89.5M139.5 65.1V92.2M141.0 54.6V95.9M142.5 61.7V98.6M144.0 60.5V97.6M145.5 63.3V93.7M147.0 56.5V103.1M148.5 60.2V97.5M150.0 57.3V93.5M151.5 54.0V104.6M153.0 58.2V108.1M154.5 62.2V97.6M156.0 32.0V129.9M157.5 48.0V112.8M159.0 60.1V95.6M160.5 43.6V114.3M162.0 65.5V96.4M163.5 53.6V102.9M165.0 43.8V106.5M166.5 57.7V101.1M168.0 63.3V89.4M169.5 58.1V96.7M171.0 66.6V97.3M172.5 46.3V107.6M174.0 58.9V102.8M175.5 46.7V108.1M177.0 54.3V109.0M178.5 48.2V108.8M180.0 64.2V95.2M181.5 35.8V120.9M183.0 62.7V91.9M184.5 57.0V98.5M186.0 50.0V107.8M187.5 35.0V112.6M189.0 54.8V98.7M190.5 65.2V91.5M192.0 50.6V102.4M193.5 50.6V97.6M195.0 58.4V95.5M196.5 67.4V96.0M198.0 65.0V90.5M199.5 67.3V88.2M201.0 66.8V92.0M202.5 69.6V86.0M204.0 65.0V100.1M205.5 57.5V100.1M207.0 60.2V100.6M208.5 59.6V96.2M210.0 63.7V92.1M211.5 62.2V98.0M213.0 65.7V93.6M214.5 66.5V93.2M216.0 63.3V92.6M217.5 60.7V94.1M219.0 68.1V89.0M220.5 66.8V90.6M222.0 57.7V92.0M223.5 71.1V86.7M225.0 72.1V84.9M226.5 63.5V91.7M228.0 67.6V91.8M229.5 58.3V97.1M231.0 64.5V91.3M232.5 62.5V97.0M234.0 67.4V90.5M235.5 69.9V91.3M237.0 71.0V85.7M238.5 63.6V88.8M240.0 71.8V86.1M241.5 66.8V89.3M243.0 69.5V86.3M244.5 63.1V94.1M246.0 61.8V91.6M247.5 67.6V89.3M249.0 70.8V86.2M250.5 70.4V88.4M252.0 63.2V92.0M253.5 69.6V85.2M255.0 72.3V84.8M256.5 62.1V89.7M258.0 70.2V86.8M259.5 68.9V91.4M261.0 70.9V84.7M262.5 70.5V87.5M264.0 66.6V89.0M265.5 66.5V90.4M267.0 61.0V94.8M268.5 61.3V96.1M270.0 62.2V96.3M271.5 64.4V90.6M273.0 65.2V90.3M274.5 70.6V89.4M276.0 72.5V86.5M277.5 66.9V93.0M279.0 68.5V88.9M280.5 70.8V88.3M282.0 67.3V90.3M283.5 70.6V87.5M285.0 65.3V96.4M286.5 62.7V97.5M288.0 70.1V91.8M289.5 64.9V92.0M291.0 69.6V85.7M292.5 73.1V85.1M294.0 69.2V87.8M295.5 69.5V86.2M297.0 70.3V88.0M298.5 74.5V84.7M300.0 71.4V86.5M301.5 71.2V85.8M303.0 69.4V85.5M304.5 71.2V83.3M306.0 72.8V84.2M307.5 75.9V81.1M309.0 76.2V81.1M310.5 76.1V81.3M312.0 75.1V81.6M313.5 76.8V79.8M315.0 76.7V81.5M316.5 75.3V81.2M318.0 76.5V80.6M319.5 76.4V80.5M321.0 74.4V81.9M322.5 74.5V81.2M324.0 76.2V80.8M325.5 75.6V81.1M327.0 76.2V80.8M328.5 70.0V87.4M330.0 70.4V85.0M331.5 73.9V84.3M333.0 67.8V88.6M334.5 61.7V98.2M336.0 71.9V86.0M337.5 66.8V94.5M339.0 63.4V94.8M340.5 67.1V87.7M342.0 64.2V99.2M343.5 65.0V93.3M345.0 62.5V99.8M346.5 66.0V97.6M348.0 65.4V91.7M349.5 53.6V104.3M351.0 57.8V108.2M352.5 64.1V95.7M354.0 51.8V99.1M355.5 63.3V93.4M357.0 53.2V104.6M358.5 57.1V92.6M360.0 65.8V93.1M361.5 57.4V96.9M363.0 57.4V93.7M364.5 53.7V99.6M366.0 61.5V96.1M367.5 59.8V102.0M369.0 60.9V96.4M370.5 64.3V92.7M372.0 68.1V87.4M373.5 63.7V92.4M375.0 65.8V88.1M376.5 72.2V84.5M378.0 73.1V83.1M379.5 72.7V83.7M381.0 67.8V90.2M382.5 73.2V85.5M384.0 73.5V85.7M385.5 74.1V81.2M387.0 75.2V81.3M388.5 73.0V83.9M390.0 71.5V83.8M391.5 73.8V82.3M393.0 75.3V81.7M394.5 76.2V80.9M396.0 75.8V80.3M397.5 74.9V80.9M399.0 77.0V80.5M400.5 76.0V81.9M402.0 75.8V81.5M403.5 76.6V80.4M405.0 76.0V80.5M406.5 75.0V81.4M408.0 75.7V80.8M409.5 73.9V82.1M411.0 75.8V82.2M412.5 75.1V80.8M414.0 75.8V81.2M415.5 73.6V83.6M417.0 75.7V80.9M418.5 73.5V84.7M420.0 72.9V84.4M421.5 72.7V83.9M423.0 74.2V84.4M424.5 75.2V82.2M426.0 70.7V84.4M427.5 72.5V84.2M429.0 74.5V82.2M430.5 71.7V84.7M432.0 72.2V84.2M433.5 66.8V90.1M435.0 71.4V86.3M436.5 73.8V83.0M438.0 73.7V85.6M439.5 73.7V84.8M441.0 70.2V88.7M442.5 69.0V84.4M444.0 67.4V85.8M445.5 71.6V86.3M447.0 66.2V90.1M448.5 60.5V94.9M450.0 67.6V91.3M451.5 68.3V86.3M453.0 68.4V85.8M454.5 70.3V88.2M456.0 64.2V94.8M457.5 65.0V89.4M459.0 64.6V91.2M460.5 67.5V89.6M462.0 66.5V93.8M463.5 65.9V92.5M465.0 70.8V85.9M466.5 71.6V85.9M468.0 62.2V95.7M469.5 69.5V89.5M471.0 65.8V93.7M472.5 63.2V90.2M474.0 64.6V95.4M475.5 55.8V95.1M477.0 65.6V88.8M478.5 58.3V98.1M480.0 68.7V90.6M481.5 61.1V91.2M483.0 67.0V88.9M484.5 68.3V89.9M486.0 52.5V107.4M487.5 64.3V94.6M489.0 53.7V97.0M490.5 65.3V94.4M492.0 64.6V91.4M493.5 64.3V97.0M495.0 64.9V92.6M496.5 63.6V92.4M498.0 40.5V110.4M499.5 45.9V109.3M501.0 65.4V94.4M502.5 54.4V108.2M504.0 62.5V97.1M505.5 55.8V99.6M507.0 55.9V101.1M508.5 57.7V94.9M510.0 46.3V107.5M511.5 62.4V95.0M513.0 63.6V91.4M514.5 58.0V102.0M516.0 51.0V105.2M517.5 51.1V106.1M519.0 43.8V112.9M520.5 46.4V101.4M522.0 51.1V103.4M523.5 58.3V95.8M525.0 62.3V98.0M526.5 49.8V118.0M528.0 59.6V95.0M529.5 57.5V92.3M531.0 55.8V97.2M532.5 45.4V105.8M534.0 53.1V103.8M535.5 48.8V107.1M537.0 51.8V109.3M538.5 53.7V100.8M540.0 44.3V101.1M541.5 46.4V107.0M543.0 50.9V118.0M544.5 34.5V127.7M546.0 65.0V96.6M547.5 55.0V108.4M549.0 46.2V114.7M550.5 47.7V114.3M552.0 55.6V101.8M553.5 62.9V96.2M555.0 64.7V97.3M556.5 61.9V94.7M558.0 55.2V99.1M559.5 63.2V91.8M561.0 54.0V95.2M562.5 44.6V119.4M564.0 32.4V123.9M565.5 52.7V105.7M567.0 50.0V100.0M568.5 65.5V91.1M570.0 57.1V102.4M571.5 59.3V90.3M573.0 46.9V109.3M574.5 49.8V106.4M576.0 31.7V114.8M577.5 40.3V102.6M579.0 51.4V105.3M580.5 50.0V111.2M582.0 50.1V100.0M583.5 58.8V93.5M585.0 43.0V105.8M586.5 62.0V95.7M588.0 63.7V92.7M589.5 55.0V111.4M591.0 60.3V106.6M592.5 56.9V102.4M594.0 50.7V112.6M595.5 47.6V112.6M597.0 38.4V113.8M598.5 47.1V113.9M600.0 44.0V114.1M601.5 59.2V95.7M603.0 50.2V104.4M604.5 49.8V100.3M606.0 48.3V108.7M607.5 43.8V122.4M609.0 44.3V116.6M610.5 59.8V107.2M612.0 49.7V105.0M613.5 39.7V112.4M615.0 33.5V114.1M616.5 47.7V114.3M618.0 59.7V92.3M619.5 54.1V99.8" stroke="#c9b0d6" stroke-width="1" fill="none" opacity="0.8"/>
 </svg>
</div>


</body></html>
